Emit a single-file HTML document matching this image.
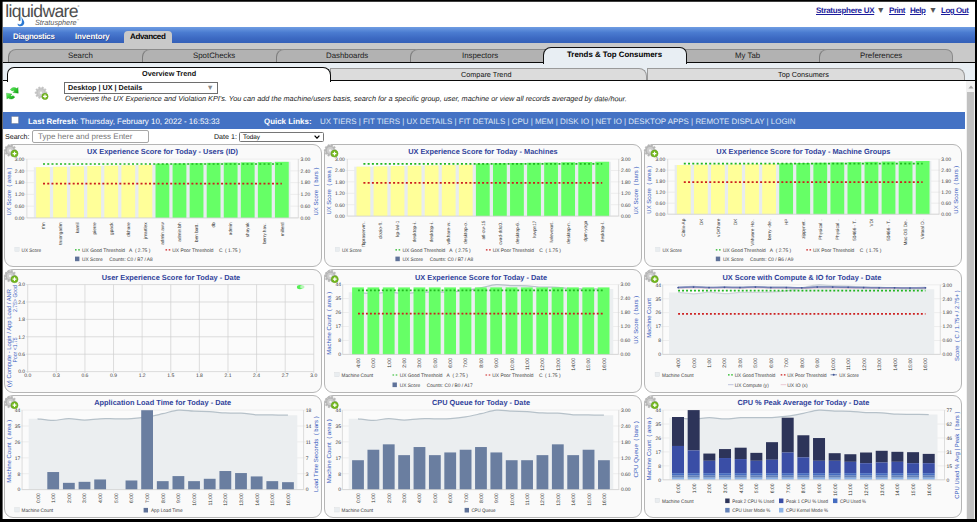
<!DOCTYPE html>
<html><head><meta charset="utf-8"><title>Stratusphere UX - Advanced - Trends &amp; Top Consumers</title>
<style>
html,body{margin:0;padding:0}
body{width:977px;height:522px;background:#fff;text-rendering:geometricPrecision;position:relative;overflow:hidden;font-family:'Liberation Sans',sans-serif;}
#pg{position:absolute;left:3px;top:2px;width:972px;height:517px;background:#fff;overflow:hidden}
.a{position:absolute;white-space:nowrap}
.u{display:inline-block;transform:rotate(0.03deg)}
.nav{left:0;top:25px;width:972px;height:16px;background:linear-gradient(#6f9de3 0%,#4a7bd0 35%,#3c69c2 70%,#3460b8 100%)}
.nav span{position:absolute;top:5px;font-weight:bold;font-size:8px;color:#fff;letter-spacing:-0.35px;text-shadow:0.5px 0.5px 0.5px #1b2f6b}
.adv{left:121px;top:29px;width:48px;height:13px;background:#c9c9c9;border-radius:4px 4px 0 0;font-weight:bold;font-size:8px;letter-spacing:-0.35px;color:#000;text-align:center;line-height:12px}
.t2{left:0;top:41px;width:972px;height:19px;background:#c9c9c9}
.tab{position:absolute;top:5.5px;height:14px;background:#b2b2b2;border:1px solid #8a8a8a;border-left:1.6px solid #7c7c7c;border-bottom:none;border-radius:8px 7px 0 0;box-sizing:border-box;font-size:8.0px;color:#1c1c1c;text-align:center;line-height:11px}
.tabt{position:absolute;top:6.6px;width:100px;text-align:center;font-size:7.85px;color:#1c1c1c;line-height:11px;z-index:2}
.tab.act{top:4px;height:17px;background:#e8eef3;border:1.2px solid #111;border-bottom:none;font-weight:bold;font-size:7.86px;color:#000;line-height:14px;z-index:3}
.bl{left:0;top:59.8px;width:972px;height:1.5px;background:#0a0a0a}
.t3{left:0;top:61px;width:972px;height:18px;background:#e8eef3}
.st{position:absolute;top:5px;height:13px;background:#dcdcdc;border:1px solid #9a9a9a;border-bottom:none;border-radius:0 8px 0 0;box-sizing:border-box;font-size:7.27px;color:#111;text-align:center;line-height:12px;padding-right:4px}
.st.act{padding-right:0;top:3.7px;height:15.2px;background:#fff;border:1.5px solid #0a0a0a;border-bottom:none;border-radius:7px 8px 0 0;font-weight:bold;line-height:12px;z-index:3}
.bl2{left:0;top:78px;width:972px;height:1.4px;background:#0a0a0a}
.hl{top:3.6px;font-weight:bold;font-size:8.0px;color:#1c1c9c;text-decoration:underline;letter-spacing:-0.45px}
.bar{left:0;top:110px;width:962px;height:16.5px;background:#4472c4;color:#fff;font-size:7.93px}
.panel{position:absolute;width:318.4px;height:122.6px;box-sizing:border-box;border:1px solid #b6b6b6;border-radius:9px;background:#fafafa}
svg text{font-family:'Liberation Sans',sans-serif}
</style></head><body>
<div id="pg">
<!-- logo -->
<svg class="a" style="left:0;top:0" width="90" height="26" viewBox="3 2 90 26">
<text x="5.3" y="16.7" font-size="17.6" fill="#4e4e4e" textLength="73.3" lengthAdjust="spacing">liquidware</text>
<text x="77.4" y="6.8" font-size="2.6" fill="#666">&#174;</text>
<text x="35" y="24.7" font-size="7.6" font-style="italic" fill="#5a5a5a" textLength="41.6" lengthAdjust="spacingAndGlyphs">Stratusphere</text>
<text x="76.8" y="21.2" font-size="2.4" fill="#777">&#8482;</text>
<path d="M21.3 16.4 C22.2 18.8 24.6 20.6 24.3 23.0 C24 25.3 21.6 26.7 19.5 26.2 C18 25.8 17.3 24.5 17.8 23.4 C18.6 24.5 20.2 24.8 21.2 23.7 C22.5 22.3 21.7 19.4 21.3 16.4Z" fill="#2b78d2"/>
</svg>
<!-- header links -->
<div class="a hl u" style="left:813.3px;letter-spacing:-0.3px">Stratusphere UX</div>
<div class="a" style="left:873.5px;top:3.2px;font-size:8.6px;color:#555">&#9660;</div>
<div class="a hl u" style="left:886px">Print</div>
<div class="a hl u" style="left:907.2px">Help</div>
<div class="a" style="left:925.7px;top:3.2px;font-size:8.6px;color:#555">&#9660;</div>
<div class="a hl u" style="left:938px">Log Out</div>
<!-- nav -->
<div class="a nav"><span class="u" style="left:10.3px">Diagnostics</span><span class="u" style="left:72.2px;letter-spacing:-0.15px">Inventory</span></div>
<div class="a adv"><span class="u">Advanced</span></div>
<div class="a t2"><div class="tab" style="left:5px;width:146px"></div><div class="tabt" style="left:27.299999999999997px"><span class="u">Search</span></div><div class="tab" style="left:139px;width:146px"></div><div class="tabt" style="left:160.7px"><span class="u">SpotChecks</span></div><div class="tab" style="left:273px;width:146px"></div><div class="tabt" style="left:294.1px"><span class="u">Dashboards</span></div><div class="tab" style="left:407px;width:145.5px"></div><div class="tabt" style="left:427.50000000000006px"><span class="u">Inspectors</span></div><div class="tab act" style="left:540px;width:143.5px"><span class="u">Trends &amp; Top Consumers</span></div><div class="tab" style="left:673px;width:156px"></div><div class="tabt" style="left:694.3px"><span class="u">My Tab</span></div><div class="tab" style="left:816px;width:134px"></div><div class="tabt" style="left:827.7px"><span class="u">Preferences</span></div></div>
<div class="a bl"></div>
<div class="a t3"><div class="st act" style="left:4.3px;width:323.6px"><span class="u">Overview Trend</span></div><div class="st" style="left:327px;width:317.4px"><span class="u">Compare Trend</span></div><div class="st" style="left:643.6px;width:318px"><span class="u">Top Consumers</span></div></div>
<div class="a bl2"></div>
<!-- toolbar -->
<svg class="a" style="left:2px;top:83px" width="15" height="16" viewBox="0 0 15 16">
<defs><linearGradient id="rg" x1="0" y1="0" x2="1" y2="1"><stop offset="0" stop-color="#7df07d"/><stop offset="0.45" stop-color="#35cf35"/><stop offset="1" stop-color="#159a15"/></linearGradient></defs>
<g fill="url(#rg)" stroke="#1aa01a" stroke-width="0.35" stroke-linejoin="round">
<path d="M5.3 4.6 C6.8 2.3 10.0 2.0 11.8 3.6 L13.0 2.4 L13.3 8.2 L7.9 7.5 L9.5 5.9 C8.6 5.3 7.7 5.4 7.1 6.0 Z"/>
<path d="M9.8 12.0 C8.2 14.4 5.0 14.6 3.2 12.9 L1.9 14.1 L1.5 8.2 L7.0 9.1 L5.4 10.7 C6.3 11.4 7.3 11.3 7.9 10.6 Z"/>
</g></svg>
<svg class="a" style="left:31px;top:83px" width="16" height="16" viewBox="0 0 16 16"><g transform="translate(1.0,1.7) scale(1.0)"><polygon points="11.86,5.29 11.86,6.71 10.41,6.89 10.09,7.87 11.15,8.87 10.32,10.01 9.04,9.32 8.21,9.92 8.48,11.35 7.14,11.79 6.51,10.47 5.49,10.47 4.86,11.79 3.52,11.35 3.79,9.92 2.96,9.32 1.68,10.01 0.85,8.87 1.91,7.87 1.59,6.89 0.14,6.71 0.14,5.29 1.59,5.11 1.91,4.13 0.85,3.13 1.68,1.99 2.96,2.68 3.79,2.08 3.52,0.65 4.86,0.21 5.49,1.53 6.51,1.53 7.14,0.21 8.48,0.65 8.21,2.08 9.04,2.68 10.32,1.99 11.15,3.13 10.09,4.13 10.41,5.11" fill="#c2c2c2" stroke="#c2c2c2" stroke-width="0.6" stroke-linejoin="round"/><circle cx="6" cy="6" r="3.3" fill="#cdcdcd"/><circle cx="6" cy="6" r="1.25" fill="#f3f3f3"/><circle cx="10.0" cy="9.7" r="3.1" fill="#74b81f" stroke="#5a9a14" stroke-width="0.5"/><path d="M8.1 9.7h3.8M10.0 7.799999999999999v3.8" stroke="#fff" stroke-width="1.2"/></g></svg>
<div class="a" style="left:61px;top:79.9px;width:153.5px;height:12.6px;border:1px solid #6e6e6e;box-sizing:border-box;background:#fff;font-weight:bold;font-size:7.22px;line-height:9.6px;padding-left:3.4px;color:#111"><span class="u">Desktop | UX | Details</span><span style="position:absolute;right:2.6px;top:0.2px;font-size:7.4px;color:#8a8a8a;font-weight:normal">&#9660;</span></div>
<div class="a" style="left:61.6px;top:91.9px;font-size:7.31px;font-style:italic;color:#222;line-height:9px"><span class="u">Overviews the UX Experience and Violation KPI's. You can add the machine/users basis, search for a specific group, user, machine or view all records averaged by date/hour.</span></div>
<!-- scrollbar -->
<div class="a" style="left:962.6px;top:79.4px;width:9px;height:440px;background:#f1f1f1"></div>
<div class="a" style="left:964.3px;top:90px;width:6.4px;height:430px;background:#c1c1c1"></div>
<svg class="a" style="left:964.6px;top:83px" width="6" height="4" viewBox="0 0 6 4"><path d="M0.4 3.6 L3 0.6 L5.6 3.6Z" fill="#a3a3a3"/></svg>
<!-- blue bar -->
<div class="a bar">
<div class="a" style="left:8.3px;top:4px;width:8px;height:8px;box-sizing:border-box;background:#fff;border:0.6px solid #8e9bb5;border-radius:1.5px"></div>
<div class="a" style="left:24.5px;top:4.8px;line-height:10px"><span class="u"><b>Last Refresh</b>: Thursday, February 10, 2022 - 16:53:33</span></div>
<div class="a" style="left:261.3px;top:4.8px;line-height:10px"><span class="u"><b>Quick Links:</b></span></div>
<div class="a" style="left:316.5px;top:4.8px;line-height:10px;font-size:7.94px;color:#dfe7f6"><span class="u">UX TIERS | FIT TIERS | UX DETAILS | FIT DETAILS | CPU | MEM | DISK IO | NET IO | DESKTOP APPS | REMOTE DISPLAY | LOGIN</span></div>
</div>
<!-- search row -->
<div class="a" style="left:2px;top:131.2px;font-size:7.1px;color:#111;line-height:9px"><span class="u">Search:</span></div>
<div class="a" style="left:29.2px;top:128.4px;width:116.6px;height:12.2px;border:1px solid #a6a6a6;border-radius:2px;box-sizing:border-box;font-size:8.03px;color:#757575;line-height:11.4px;padding-left:4.4px"><span class="u">Type here and press Enter</span></div>
<div class="a" style="left:211px;top:131.2px;font-size:7.1px;color:#111;line-height:9px"><span class="u">Date 1:</span></div>
<div class="a" style="left:236px;top:130px;width:85px;height:10.4px;border:1px solid #767676;border-radius:1.5px;box-sizing:border-box;font-size:6.4px;color:#000;line-height:9px;padding-left:3px;background:#fff"><span class="u">Today</span><svg style="position:absolute;right:2.6px;top:2.2px" width="6" height="4" viewBox="0 0 6 4"><path d="M0.6 0.6 L3 3.2 L5.4 0.6" fill="none" stroke="#000" stroke-width="1.2"/></svg></div>
<div class="panel" style="left:1px;top:142px;height:123px"></div><div class="panel" style="left:321px;top:142px;height:123px"></div><div class="panel" style="left:641px;top:142px;height:123px"></div><div class="panel" style="left:1px;top:267px;height:124px"></div><div class="panel" style="left:321px;top:267px;height:124px"></div><div class="panel" style="left:641px;top:267px;height:124px"></div><div class="panel" style="left:1px;top:393px;height:123px"></div><div class="panel" style="left:321px;top:393px;height:123px"></div><div class="panel" style="left:641px;top:393px;height:123px"></div>
<svg class="a" style="left:-3px;top:-2px" width="977" height="522" viewBox="0 0 977 522">
<text x="162.50" y="154.40" font-size="7.4" fill="#31439b" text-anchor="middle" textLength="151.00" lengthAdjust="spacingAndGlyphs" font-weight="bold" >UX Experience Score for Today - Users (ID)</text><rect x="26.9" y="159.1" width="271.40000000000003" height="58.80000000000001" fill="#fbfbfb" stroke="none"/><line x1="24.9" y1="159.10" x2="300.3" y2="159.10" stroke="#e4e4e4" stroke-width="0.6"/><line x1="24.9" y1="170.86" x2="300.3" y2="170.86" stroke="#e4e4e4" stroke-width="0.6"/><line x1="24.9" y1="182.62" x2="300.3" y2="182.62" stroke="#e4e4e4" stroke-width="0.6"/><line x1="24.9" y1="194.38" x2="300.3" y2="194.38" stroke="#e4e4e4" stroke-width="0.6"/><line x1="24.9" y1="206.14" x2="300.3" y2="206.14" stroke="#e4e4e4" stroke-width="0.6"/><line x1="24.9" y1="217.90" x2="300.3" y2="217.90" stroke="#e4e4e4" stroke-width="0.6"/><line x1="26.9" y1="159.1" x2="26.9" y2="217.9" stroke="#d0d0d0" stroke-width="0.7"/><line x1="298.3" y1="159.1" x2="298.3" y2="217.9" stroke="#d0d0d0" stroke-width="0.7"/><text x="24.40" y="160.90" font-size="5" fill="#333" text-anchor="end" >3.00</text><text x="24.40" y="172.66" font-size="5" fill="#333" text-anchor="end" >2.40</text><text x="24.40" y="184.42" font-size="5" fill="#333" text-anchor="end" >1.80</text><text x="24.40" y="196.18" font-size="5" fill="#333" text-anchor="end" >1.20</text><text x="24.40" y="207.94" font-size="5" fill="#333" text-anchor="end" >0.60</text><text x="24.40" y="219.70" font-size="5" fill="#333" text-anchor="end" >0.00</text><text x="300.50" y="160.90" font-size="5" fill="#333" >3.00</text><text x="300.50" y="172.66" font-size="5" fill="#333" >2.40</text><text x="300.50" y="184.42" font-size="5" fill="#333" >1.80</text><text x="300.50" y="196.18" font-size="5" fill="#333" >1.20</text><text x="300.50" y="207.94" font-size="5" fill="#333" >0.60</text><text x="300.50" y="219.70" font-size="5" fill="#333" >0.00</text><polygon points="33.80,217.90 33.80,167.14 43.00,167.14 60.06,166.78 77.12,166.42 94.18,166.06 111.24,165.70 128.30,165.34 145.36,164.98 162.42,163.61 179.48,163.36 196.54,163.10 213.60,162.85 230.66,162.60 247.72,162.35 264.78,162.10 281.84,161.84 290.50,161.84 290.50,217.90" fill="#e8ecef"/><rect x="36.10" y="167.14" width="13.8" height="50.76" fill="#ffff99"/><rect x="53.16" y="166.78" width="13.8" height="51.12" fill="#ffff99"/><rect x="70.22" y="166.42" width="13.8" height="51.48" fill="#ffff99"/><rect x="87.28" y="166.06" width="13.8" height="51.84" fill="#ffff99"/><rect x="104.34" y="165.70" width="13.8" height="52.20" fill="#ffff99"/><rect x="121.40" y="165.34" width="13.8" height="52.56" fill="#ffff99"/><rect x="138.46" y="164.98" width="13.8" height="52.92" fill="#ffff99"/><rect x="155.52" y="163.61" width="13.8" height="54.29" fill="#66ff66"/><rect x="172.58" y="163.36" width="13.8" height="54.54" fill="#66ff66"/><rect x="189.64" y="163.10" width="13.8" height="54.80" fill="#66ff66"/><rect x="206.70" y="162.85" width="13.8" height="55.05" fill="#66ff66"/><rect x="223.76" y="162.60" width="13.8" height="55.30" fill="#66ff66"/><rect x="240.82" y="162.35" width="13.8" height="55.55" fill="#66ff66"/><rect x="257.88" y="162.10" width="13.8" height="55.80" fill="#66ff66"/><rect x="274.94" y="161.84" width="13.8" height="56.06" fill="#66ff66"/><line x1="26.9" y1="217.9" x2="298.3" y2="217.9" stroke="#cfcfcf" stroke-width="0.7"/><line x1="43.00" y1="164.00" x2="281.84" y2="164.00" stroke="#1fb61f" stroke-width="1.7" stroke-dasharray="2 2.24"/><line x1="43.00" y1="183.60" x2="281.84" y2="183.60" stroke="#cc1f1f" stroke-width="1.7" stroke-dasharray="2 2.24"/><text x="44.70" y="222.40" font-size="4.7" fill="#333" text-anchor="end" transform="rotate(-90 44.70 222.40)" >tfm</text><text x="61.76" y="222.40" font-size="4.7" fill="#333" text-anchor="end" transform="rotate(-90 61.76 222.40)" >truongadm</text><text x="78.82" y="222.40" font-size="4.7" fill="#333" text-anchor="end" transform="rotate(-90 78.82 222.40)" >kamil</text><text x="95.88" y="222.40" font-size="4.7" fill="#333" text-anchor="end" transform="rotate(-90 95.88 222.40)" >pierre</text><text x="112.94" y="222.40" font-size="4.7" fill="#333" text-anchor="end" transform="rotate(-90 112.94 222.40)" >gpack</text><text x="130.00" y="222.40" font-size="4.7" fill="#333" text-anchor="end" transform="rotate(-90 130.00 222.40)" >dkhare</text><text x="147.06" y="222.40" font-size="4.7" fill="#333" text-anchor="end" transform="rotate(-90 147.06 222.40)" >jmartlex</text><text x="164.12" y="222.40" font-size="4.7" fill="#333" text-anchor="end" transform="rotate(-90 164.12 222.40)" >admin.avw</text><text x="181.18" y="222.40" font-size="4.7" fill="#333" text-anchor="end" transform="rotate(-90 181.18 222.40)" >admin.bh</text><text x="198.24" y="222.40" font-size="4.7" fill="#333" text-anchor="end" transform="rotate(-90 198.24 222.40)" >ben batt..</text><text x="215.30" y="222.40" font-size="4.7" fill="#333" text-anchor="end" transform="rotate(-90 215.30 222.40)" >db</text><text x="232.36" y="222.40" font-size="4.7" fill="#333" text-anchor="end" transform="rotate(-90 232.36 222.40)" >admin</text><text x="249.42" y="222.40" font-size="4.7" fill="#333" text-anchor="end" transform="rotate(-90 249.42 222.40)" >shayak</text><text x="266.48" y="222.40" font-size="4.7" fill="#333" text-anchor="end" transform="rotate(-90 266.48 222.40)" >berry.hav..</text><text x="283.54" y="222.40" font-size="4.7" fill="#333" text-anchor="end" transform="rotate(-90 283.54 222.40)" >millerd</text><text x="10.60" y="191.50" font-size="5.95" fill="#3a5cc0" text-anchor="middle" textLength="48.00" lengthAdjust="spacingAndGlyphs" transform="rotate(-90 10.60 191.50)" >UX Score&#160;&#160;( area )</text><text x="317.70" y="191.50" font-size="5.95" fill="#3a5cc0" text-anchor="middle" textLength="48.00" lengthAdjust="spacingAndGlyphs" transform="rotate(-90 317.70 191.50)" >UX Score&#160;&#160;( bars )</text><rect x="14.8" y="247.20000000000002" width="4.4" height="4.4" fill="#e9edf0" stroke="#dde1e4" stroke-width="0.4"/><text x="21.60" y="251.80" font-size="5" fill="#3a3a3a" textLength="19.50" lengthAdjust="spacingAndGlyphs" >UX Score</text><line x1="75.00" y1="249.80" x2="80.50" y2="249.80" stroke="#1fb61f" stroke-width="1.2" stroke-dasharray="1.6 1.6"/><text x="82.10" y="251.80" font-size="5" fill="#3a3a3a" textLength="68.20" lengthAdjust="spacingAndGlyphs" >UX Good Threshold&#160;&#160;&#160;A&#160;&#160;( 2.75 )</text><line x1="165.50" y1="249.80" x2="171.00" y2="249.80" stroke="#cc1f1f" stroke-width="1.2" stroke-dasharray="1.6 1.6"/><text x="172.30" y="251.80" font-size="5" fill="#3a3a3a" textLength="68.20" lengthAdjust="spacingAndGlyphs" >UX Poor Threshold&#160;&#160;&#160;&#160;C&#160;&#160;( 1.75 )</text><rect x="75" y="256.59999999999997" width="4.4" height="4.6" fill="#5f7299"/><text x="82.10" y="260.90" font-size="5" fill="#3a3a3a" textLength="70.60" lengthAdjust="spacingAndGlyphs" >UX Score&#160;&#160;&#160;&#160;&#160;Counts: C0 / B7 / A8</text><g transform="translate(4.2,144.4) scale(1.0)"><polygon points="11.86,5.29 11.86,6.71 10.41,6.89 10.09,7.87 11.15,8.87 10.32,10.01 9.04,9.32 8.21,9.92 8.48,11.35 7.14,11.79 6.51,10.47 5.49,10.47 4.86,11.79 3.52,11.35 3.79,9.92 2.96,9.32 1.68,10.01 0.85,8.87 1.91,7.87 1.59,6.89 0.14,6.71 0.14,5.29 1.59,5.11 1.91,4.13 0.85,3.13 1.68,1.99 2.96,2.68 3.79,2.08 3.52,0.65 4.86,0.21 5.49,1.53 6.51,1.53 7.14,0.21 8.48,0.65 8.21,2.08 9.04,2.68 10.32,1.99 11.15,3.13 10.09,4.13 10.41,5.11" fill="#b6b6b6" stroke="#b6b6b6" stroke-width="0.6" stroke-linejoin="round"/><circle cx="6" cy="6" r="3.3" fill="#cdcdcd"/><circle cx="6" cy="6" r="1.25" fill="#f3f3f3"/><circle cx="10.3" cy="9.2" r="3.5" fill="#74b81f" stroke="#5a9a14" stroke-width="0.5"/><path d="M8.4 9.2h3.8M10.3 7.299999999999999v3.8" stroke="#fff" stroke-width="1.2"/></g><text x="482.90" y="154.40" font-size="7.4" fill="#31439b" text-anchor="middle" textLength="149.50" lengthAdjust="spacingAndGlyphs" font-weight="bold" >UX Experience Score for Today - Machines</text><rect x="347.29999999999995" y="159.1" width="271.4000000000001" height="57.0" fill="#fbfbfb" stroke="none"/><line x1="345.29999999999995" y1="159.10" x2="620.7" y2="159.10" stroke="#e4e4e4" stroke-width="0.6"/><line x1="345.29999999999995" y1="170.50" x2="620.7" y2="170.50" stroke="#e4e4e4" stroke-width="0.6"/><line x1="345.29999999999995" y1="181.90" x2="620.7" y2="181.90" stroke="#e4e4e4" stroke-width="0.6"/><line x1="345.29999999999995" y1="193.30" x2="620.7" y2="193.30" stroke="#e4e4e4" stroke-width="0.6"/><line x1="345.29999999999995" y1="204.70" x2="620.7" y2="204.70" stroke="#e4e4e4" stroke-width="0.6"/><line x1="345.29999999999995" y1="216.10" x2="620.7" y2="216.10" stroke="#e4e4e4" stroke-width="0.6"/><line x1="347.29999999999995" y1="159.1" x2="347.29999999999995" y2="216.1" stroke="#d0d0d0" stroke-width="0.7"/><line x1="618.7" y1="159.1" x2="618.7" y2="216.1" stroke="#d0d0d0" stroke-width="0.7"/><text x="344.80" y="160.90" font-size="5" fill="#333" text-anchor="end" >3.00</text><text x="344.80" y="172.30" font-size="5" fill="#333" text-anchor="end" >2.40</text><text x="344.80" y="183.70" font-size="5" fill="#333" text-anchor="end" >1.80</text><text x="344.80" y="195.10" font-size="5" fill="#333" text-anchor="end" >1.20</text><text x="344.80" y="206.50" font-size="5" fill="#333" text-anchor="end" >0.60</text><text x="344.80" y="217.90" font-size="5" fill="#333" text-anchor="end" >0.00</text><text x="620.90" y="160.90" font-size="5" fill="#333" >3.00</text><text x="620.90" y="172.30" font-size="5" fill="#333" >2.40</text><text x="620.90" y="183.70" font-size="5" fill="#333" >1.80</text><text x="620.90" y="195.10" font-size="5" fill="#333" >1.20</text><text x="620.90" y="206.50" font-size="5" fill="#333" >0.60</text><text x="620.90" y="217.90" font-size="5" fill="#333" >0.00</text><polygon points="354.20,216.10 354.20,166.70 363.40,166.70 380.46,166.38 397.52,166.07 414.58,165.75 431.64,165.43 448.70,165.12 465.76,164.80 482.82,163.47 499.88,163.23 516.94,162.98 534.00,162.74 551.06,162.49 568.12,162.25 585.18,162.00 602.24,161.76 610.90,161.76 610.90,216.10" fill="#e8ecef"/><rect x="356.50" y="166.70" width="13.8" height="49.40" fill="#ffff99"/><rect x="373.56" y="166.38" width="13.8" height="49.72" fill="#ffff99"/><rect x="390.62" y="166.07" width="13.8" height="50.03" fill="#ffff99"/><rect x="407.68" y="165.75" width="13.8" height="50.35" fill="#ffff99"/><rect x="424.74" y="165.43" width="13.8" height="50.67" fill="#ffff99"/><rect x="441.80" y="165.12" width="13.8" height="50.98" fill="#ffff99"/><rect x="458.86" y="164.80" width="13.8" height="51.30" fill="#ffff99"/><rect x="475.92" y="163.47" width="13.8" height="52.63" fill="#66ff66"/><rect x="492.98" y="163.23" width="13.8" height="52.87" fill="#66ff66"/><rect x="510.04" y="162.98" width="13.8" height="53.12" fill="#66ff66"/><rect x="527.10" y="162.74" width="13.8" height="53.36" fill="#66ff66"/><rect x="544.16" y="162.49" width="13.8" height="53.61" fill="#66ff66"/><rect x="561.22" y="162.25" width="13.8" height="53.85" fill="#66ff66"/><rect x="578.28" y="162.00" width="13.8" height="54.10" fill="#66ff66"/><rect x="595.34" y="161.76" width="13.8" height="54.34" fill="#66ff66"/><line x1="347.29999999999995" y1="216.1" x2="618.7" y2="216.1" stroke="#cfcfcf" stroke-width="0.7"/><line x1="363.40" y1="163.85" x2="602.24" y2="163.85" stroke="#1fb61f" stroke-width="1.7" stroke-dasharray="2 2.24"/><line x1="363.40" y1="182.85" x2="602.24" y2="182.85" stroke="#cc1f1f" stroke-width="1.7" stroke-dasharray="2 2.24"/><text x="365.10" y="220.60" font-size="4.7" fill="#333" text-anchor="end" transform="rotate(-90 365.10 220.60)" >fbpraservm..</text><text x="382.16" y="220.60" font-size="4.7" fill="#333" text-anchor="end" transform="rotate(-90 382.16 220.60)" >clozio-fl..</text><text x="399.22" y="220.60" font-size="4.7" fill="#333" text-anchor="end" transform="rotate(-90 399.22 220.60)" >kp-lwl-1</text><text x="416.28" y="220.60" font-size="4.7" fill="#333" text-anchor="end" transform="rotate(-90 416.28 220.60)" >desktop-i..</text><text x="433.34" y="220.60" font-size="4.7" fill="#333" text-anchor="end" transform="rotate(-90 433.34 220.60)" >desktop-i..</text><text x="450.40" y="220.60" font-size="4.7" fill="#333" text-anchor="end" transform="rotate(-90 450.40 220.60)" >vdkhare-w..</text><text x="467.46" y="220.60" font-size="4.7" fill="#333" text-anchor="end" transform="rotate(-90 467.46 220.60)" >desktop-o..</text><text x="484.52" y="220.60" font-size="4.7" fill="#333" text-anchor="end" transform="rotate(-90 484.52 220.60)" >atl-cw-15</text><text x="501.58" y="220.60" font-size="4.7" fill="#333" text-anchor="end" transform="rotate(-90 501.58 220.60)" >cvad-ddc0..</text><text x="518.64" y="220.60" font-size="4.7" fill="#333" text-anchor="end" transform="rotate(-90 518.64 220.60)" >desktop-6..</text><text x="535.70" y="220.60" font-size="4.7" fill="#333" text-anchor="end" transform="rotate(-90 535.70 220.60)" >lwvpn17</text><text x="552.76" y="220.60" font-size="4.7" fill="#333" text-anchor="end" transform="rotate(-90 552.76 220.60)" >lwlevexut..</text><text x="569.82" y="220.60" font-size="4.7" fill="#333" text-anchor="end" transform="rotate(-90 569.82 220.60)" >desktop-n..</text><text x="586.88" y="220.60" font-size="4.7" fill="#333" text-anchor="end" transform="rotate(-90 586.88 220.60)" >dpm-yoga</text><text x="603.94" y="220.60" font-size="4.7" fill="#333" text-anchor="end" transform="rotate(-90 603.94 220.60)" >desktop-l..</text><text x="331.00" y="190.60" font-size="5.95" fill="#3a5cc0" text-anchor="middle" textLength="48.00" lengthAdjust="spacingAndGlyphs" transform="rotate(-90 331.00 190.60)" >UX Score&#160;&#160;( area )</text><text x="638.10" y="190.60" font-size="5.95" fill="#3a5cc0" text-anchor="middle" textLength="48.00" lengthAdjust="spacingAndGlyphs" transform="rotate(-90 638.10 190.60)" >UX Score&#160;&#160;( bars )</text><rect x="335.2" y="247.20000000000002" width="4.4" height="4.4" fill="#e9edf0" stroke="#dde1e4" stroke-width="0.4"/><text x="342.00" y="251.80" font-size="5" fill="#3a3a3a" textLength="19.50" lengthAdjust="spacingAndGlyphs" >UX Score</text><line x1="395.40" y1="249.80" x2="400.90" y2="249.80" stroke="#1fb61f" stroke-width="1.2" stroke-dasharray="1.6 1.6"/><text x="402.50" y="251.80" font-size="5" fill="#3a3a3a" textLength="68.20" lengthAdjust="spacingAndGlyphs" >UX Good Threshold&#160;&#160;&#160;A&#160;&#160;( 2.75 )</text><line x1="485.90" y1="249.80" x2="491.40" y2="249.80" stroke="#cc1f1f" stroke-width="1.2" stroke-dasharray="1.6 1.6"/><text x="492.70" y="251.80" font-size="5" fill="#3a3a3a" textLength="68.20" lengthAdjust="spacingAndGlyphs" >UX Poor Threshold&#160;&#160;&#160;&#160;C&#160;&#160;( 1.75 )</text><rect x="395.4" y="256.59999999999997" width="4.4" height="4.6" fill="#5f7299"/><text x="402.50" y="260.90" font-size="5" fill="#3a3a3a" textLength="70.60" lengthAdjust="spacingAndGlyphs" >UX Score&#160;&#160;&#160;&#160;&#160;Counts: C0 / B7 / A8</text><g transform="translate(324.2,144.4) scale(1.0)"><polygon points="11.86,5.29 11.86,6.71 10.41,6.89 10.09,7.87 11.15,8.87 10.32,10.01 9.04,9.32 8.21,9.92 8.48,11.35 7.14,11.79 6.51,10.47 5.49,10.47 4.86,11.79 3.52,11.35 3.79,9.92 2.96,9.32 1.68,10.01 0.85,8.87 1.91,7.87 1.59,6.89 0.14,6.71 0.14,5.29 1.59,5.11 1.91,4.13 0.85,3.13 1.68,1.99 2.96,2.68 3.79,2.08 3.52,0.65 4.86,0.21 5.49,1.53 6.51,1.53 7.14,0.21 8.48,0.65 8.21,2.08 9.04,2.68 10.32,1.99 11.15,3.13 10.09,4.13 10.41,5.11" fill="#b6b6b6" stroke="#b6b6b6" stroke-width="0.6" stroke-linejoin="round"/><circle cx="6" cy="6" r="3.3" fill="#cdcdcd"/><circle cx="6" cy="6" r="1.25" fill="#f3f3f3"/><circle cx="10.3" cy="9.2" r="3.5" fill="#74b81f" stroke="#5a9a14" stroke-width="0.5"/><path d="M8.4 9.2h3.8M10.3 7.299999999999999v3.8" stroke="#fff" stroke-width="1.2"/></g><text x="803.30" y="154.40" font-size="7.4" fill="#31439b" text-anchor="middle" textLength="174.00" lengthAdjust="spacingAndGlyphs" font-weight="bold" >UX Experience Score for Today - Machine Groups</text><rect x="667.6999999999999" y="159.1" width="271.4" height="55.099999999999994" fill="#fbfbfb" stroke="none"/><line x1="665.6999999999999" y1="159.10" x2="941.0999999999999" y2="159.10" stroke="#e4e4e4" stroke-width="0.6"/><line x1="665.6999999999999" y1="170.12" x2="941.0999999999999" y2="170.12" stroke="#e4e4e4" stroke-width="0.6"/><line x1="665.6999999999999" y1="181.14" x2="941.0999999999999" y2="181.14" stroke="#e4e4e4" stroke-width="0.6"/><line x1="665.6999999999999" y1="192.16" x2="941.0999999999999" y2="192.16" stroke="#e4e4e4" stroke-width="0.6"/><line x1="665.6999999999999" y1="203.18" x2="941.0999999999999" y2="203.18" stroke="#e4e4e4" stroke-width="0.6"/><line x1="665.6999999999999" y1="214.20" x2="941.0999999999999" y2="214.20" stroke="#e4e4e4" stroke-width="0.6"/><line x1="667.6999999999999" y1="159.1" x2="667.6999999999999" y2="214.2" stroke="#d0d0d0" stroke-width="0.7"/><line x1="939.0999999999999" y1="159.1" x2="939.0999999999999" y2="214.2" stroke="#d0d0d0" stroke-width="0.7"/><text x="665.20" y="160.90" font-size="5" fill="#333" text-anchor="end" >3.00</text><text x="665.20" y="171.92" font-size="5" fill="#333" text-anchor="end" >2.40</text><text x="665.20" y="182.94" font-size="5" fill="#333" text-anchor="end" >1.80</text><text x="665.20" y="193.96" font-size="5" fill="#333" text-anchor="end" >1.20</text><text x="665.20" y="204.98" font-size="5" fill="#333" text-anchor="end" >0.60</text><text x="665.20" y="216.00" font-size="5" fill="#333" text-anchor="end" >0.00</text><text x="941.30" y="160.90" font-size="5" fill="#333" >3.00</text><text x="941.30" y="171.92" font-size="5" fill="#333" >2.40</text><text x="941.30" y="182.94" font-size="5" fill="#333" >1.80</text><text x="941.30" y="193.96" font-size="5" fill="#333" >1.20</text><text x="941.30" y="204.98" font-size="5" fill="#333" >0.60</text><text x="941.30" y="216.00" font-size="5" fill="#333" >0.00</text><polygon points="674.60,214.20 674.60,164.98 683.80,164.98 700.86,164.79 717.92,164.61 734.98,164.43 752.04,164.24 769.10,164.06 786.16,163.32 803.22,163.03 820.28,162.73 837.34,162.43 854.40,162.13 871.46,161.83 888.52,161.53 905.58,161.24 922.64,160.94 931.30,160.94 931.30,214.20" fill="#e8ecef"/><rect x="676.90" y="164.98" width="13.8" height="49.22" fill="#ffff99"/><rect x="693.96" y="164.79" width="13.8" height="49.41" fill="#ffff99"/><rect x="711.02" y="164.61" width="13.8" height="49.59" fill="#ffff99"/><rect x="728.08" y="164.43" width="13.8" height="49.77" fill="#ffff99"/><rect x="745.14" y="164.24" width="13.8" height="49.96" fill="#ffff99"/><rect x="762.20" y="164.06" width="13.8" height="50.14" fill="#ffff99"/><rect x="779.26" y="163.32" width="13.8" height="50.88" fill="#66ff66"/><rect x="796.32" y="163.03" width="13.8" height="51.17" fill="#66ff66"/><rect x="813.38" y="162.73" width="13.8" height="51.47" fill="#66ff66"/><rect x="830.44" y="162.43" width="13.8" height="51.77" fill="#66ff66"/><rect x="847.50" y="162.13" width="13.8" height="52.07" fill="#66ff66"/><rect x="864.56" y="161.83" width="13.8" height="52.37" fill="#66ff66"/><rect x="881.62" y="161.53" width="13.8" height="52.67" fill="#66ff66"/><rect x="898.68" y="161.24" width="13.8" height="52.96" fill="#66ff66"/><rect x="915.74" y="160.94" width="13.8" height="53.26" fill="#66ff66"/><line x1="667.6999999999999" y1="214.2" x2="939.0999999999999" y2="214.2" stroke="#cfcfcf" stroke-width="0.7"/><line x1="683.80" y1="163.69" x2="922.64" y2="163.69" stroke="#1fb61f" stroke-width="1.7" stroke-dasharray="2 2.24"/><line x1="683.80" y1="182.06" x2="922.64" y2="182.06" stroke="#cc1f1f" stroke-width="1.7" stroke-dasharray="2 2.24"/><text x="685.50" y="218.70" font-size="4.7" fill="#333" text-anchor="end" transform="rotate(-90 685.50 218.70)" >Citrix-Ap</text><text x="702.56" y="218.70" font-size="4.7" fill="#333" text-anchor="end" transform="rotate(-90 702.56 218.70)" >DK</text><text x="719.62" y="218.70" font-size="4.7" fill="#333" text-anchor="end" transform="rotate(-90 719.62 218.70)" >vDKhare</text><text x="736.68" y="218.70" font-size="4.7" fill="#333" text-anchor="end" transform="rotate(-90 736.68 218.70)" >DK</text><text x="753.74" y="218.70" font-size="4.7" fill="#333" text-anchor="end" transform="rotate(-90 753.74 218.70)" >VMware Ho..</text><text x="770.80" y="218.70" font-size="4.7" fill="#333" text-anchor="end" transform="rotate(-90 770.80 218.70)" >berry -de..</text><text x="787.86" y="218.70" font-size="4.7" fill="#333" text-anchor="end" transform="rotate(-90 787.86 218.70)" >HP</text><text x="804.92" y="218.70" font-size="4.7" fill="#333" text-anchor="end" transform="rotate(-90 804.92 218.70)" >zippynet..</text><text x="821.98" y="218.70" font-size="4.7" fill="#333" text-anchor="end" transform="rotate(-90 821.98 218.70)" >Physical ..</text><text x="839.04" y="218.70" font-size="4.7" fill="#333" text-anchor="end" transform="rotate(-90 839.04 218.70)" >Physical ..</text><text x="856.10" y="218.70" font-size="4.7" fill="#333" text-anchor="end" transform="rotate(-90 856.10 218.70)" >50466 - T..</text><text x="873.16" y="218.70" font-size="4.7" fill="#333" text-anchor="end" transform="rotate(-90 873.16 218.70)" >VDI</text><text x="890.22" y="218.70" font-size="4.7" fill="#333" text-anchor="end" transform="rotate(-90 890.22 218.70)" >50466 - T..</text><text x="907.28" y="218.70" font-size="4.7" fill="#333" text-anchor="end" transform="rotate(-90 907.28 218.70)" >Mac OS De..</text><text x="924.34" y="218.70" font-size="4.7" fill="#333" text-anchor="end" transform="rotate(-90 924.34 218.70)" >Virtual D..</text><text x="651.40" y="189.65" font-size="5.95" fill="#3a5cc0" text-anchor="middle" textLength="48.00" lengthAdjust="spacingAndGlyphs" transform="rotate(-90 651.40 189.65)" >UX Score&#160;&#160;( area )</text><text x="958.50" y="189.65" font-size="5.95" fill="#3a5cc0" text-anchor="middle" textLength="48.00" lengthAdjust="spacingAndGlyphs" transform="rotate(-90 958.50 189.65)" >UX Score&#160;&#160;( bars )</text><rect x="655.5999999999999" y="247.20000000000002" width="4.4" height="4.4" fill="#e9edf0" stroke="#dde1e4" stroke-width="0.4"/><text x="662.40" y="251.80" font-size="5" fill="#3a3a3a" textLength="19.50" lengthAdjust="spacingAndGlyphs" >UX Score</text><line x1="715.80" y1="249.80" x2="721.30" y2="249.80" stroke="#1fb61f" stroke-width="1.2" stroke-dasharray="1.6 1.6"/><text x="722.90" y="251.80" font-size="5" fill="#3a3a3a" textLength="68.20" lengthAdjust="spacingAndGlyphs" >UX Good Threshold&#160;&#160;&#160;A&#160;&#160;( 2.75 )</text><line x1="806.30" y1="249.80" x2="811.80" y2="249.80" stroke="#cc1f1f" stroke-width="1.2" stroke-dasharray="1.6 1.6"/><text x="813.10" y="251.80" font-size="5" fill="#3a3a3a" textLength="68.20" lengthAdjust="spacingAndGlyphs" >UX Poor Threshold&#160;&#160;&#160;&#160;C&#160;&#160;( 1.75 )</text><rect x="715.8" y="256.59999999999997" width="4.4" height="4.6" fill="#5f7299"/><text x="722.90" y="260.90" font-size="5" fill="#3a3a3a" textLength="70.60" lengthAdjust="spacingAndGlyphs" >UX Score&#160;&#160;&#160;&#160;&#160;Counts: C0 / B6 / A9</text><g transform="translate(644.2,144.4) scale(1.0)"><polygon points="11.86,5.29 11.86,6.71 10.41,6.89 10.09,7.87 11.15,8.87 10.32,10.01 9.04,9.32 8.21,9.92 8.48,11.35 7.14,11.79 6.51,10.47 5.49,10.47 4.86,11.79 3.52,11.35 3.79,9.92 2.96,9.32 1.68,10.01 0.85,8.87 1.91,7.87 1.59,6.89 0.14,6.71 0.14,5.29 1.59,5.11 1.91,4.13 0.85,3.13 1.68,1.99 2.96,2.68 3.79,2.08 3.52,0.65 4.86,0.21 5.49,1.53 6.51,1.53 7.14,0.21 8.48,0.65 8.21,2.08 9.04,2.68 10.32,1.99 11.15,3.13 10.09,4.13 10.41,5.11" fill="#b6b6b6" stroke="#b6b6b6" stroke-width="0.6" stroke-linejoin="round"/><circle cx="6" cy="6" r="3.3" fill="#cdcdcd"/><circle cx="6" cy="6" r="1.25" fill="#f3f3f3"/><circle cx="10.3" cy="9.2" r="3.5" fill="#74b81f" stroke="#5a9a14" stroke-width="0.5"/><path d="M8.4 9.2h3.8M10.3 7.299999999999999v3.8" stroke="#fff" stroke-width="1.2"/></g><text x="171.00" y="280.00" font-size="7.4" fill="#31439b" text-anchor="middle" textLength="138.50" lengthAdjust="spacingAndGlyphs" font-weight="bold" >User Experience Score for Today - Date</text><rect x="27.7" y="284.6" width="286.1" height="87.0" fill="#fbfbfb"/><line x1="27.70" y1="284.6" x2="27.70" y2="373.1" stroke="#d0d0d0" stroke-width="0.7"/><text x="27.70" y="377.20" font-size="5" fill="#333" text-anchor="middle" >0.0</text><line x1="56.31" y1="284.6" x2="56.31" y2="373.1" stroke="#d0d0d0" stroke-width="0.7"/><text x="56.31" y="377.20" font-size="5" fill="#333" text-anchor="middle" >0.3</text><line x1="84.92" y1="284.6" x2="84.92" y2="373.1" stroke="#d0d0d0" stroke-width="0.7"/><text x="84.92" y="377.20" font-size="5" fill="#333" text-anchor="middle" >0.6</text><line x1="113.53" y1="284.6" x2="113.53" y2="373.1" stroke="#d0d0d0" stroke-width="0.7"/><text x="113.53" y="377.20" font-size="5" fill="#333" text-anchor="middle" >0.9</text><line x1="142.14" y1="284.6" x2="142.14" y2="373.1" stroke="#d0d0d0" stroke-width="0.7"/><text x="142.14" y="377.20" font-size="5" fill="#333" text-anchor="middle" >1.2</text><line x1="170.75" y1="284.6" x2="170.75" y2="373.1" stroke="#d0d0d0" stroke-width="0.7"/><text x="170.75" y="377.20" font-size="5" fill="#333" text-anchor="middle" >1.5</text><line x1="199.36" y1="284.6" x2="199.36" y2="373.1" stroke="#d0d0d0" stroke-width="0.7"/><text x="199.36" y="377.20" font-size="5" fill="#333" text-anchor="middle" >1.8</text><line x1="227.97" y1="284.6" x2="227.97" y2="373.1" stroke="#d0d0d0" stroke-width="0.7"/><text x="227.97" y="377.20" font-size="5" fill="#333" text-anchor="middle" >2.1</text><line x1="256.58" y1="284.6" x2="256.58" y2="373.1" stroke="#d0d0d0" stroke-width="0.7"/><text x="256.58" y="377.20" font-size="5" fill="#333" text-anchor="middle" >2.4</text><line x1="285.19" y1="284.6" x2="285.19" y2="373.1" stroke="#d0d0d0" stroke-width="0.7"/><text x="285.19" y="377.20" font-size="5" fill="#333" text-anchor="middle" >2.7</text><line x1="313.80" y1="284.6" x2="313.80" y2="373.1" stroke="#d0d0d0" stroke-width="0.7"/><text x="313.80" y="377.20" font-size="5" fill="#333" text-anchor="middle" >3.0</text><line x1="26.2" y1="284.60" x2="313.8" y2="284.60" stroke="#d0d0d0" stroke-width="0.7"/><text x="25.10" y="286.40" font-size="5" fill="#333" text-anchor="end" >3.0</text><line x1="26.2" y1="302.00" x2="313.8" y2="302.00" stroke="#d0d0d0" stroke-width="0.7"/><text x="25.10" y="303.80" font-size="5" fill="#333" text-anchor="end" >2.4</text><line x1="26.2" y1="319.40" x2="313.8" y2="319.40" stroke="#d0d0d0" stroke-width="0.7"/><text x="25.10" y="321.20" font-size="5" fill="#333" text-anchor="end" >1.8</text><line x1="26.2" y1="336.80" x2="313.8" y2="336.80" stroke="#d0d0d0" stroke-width="0.7"/><text x="25.10" y="338.60" font-size="5" fill="#333" text-anchor="end" >1.2</text><line x1="26.2" y1="354.20" x2="313.8" y2="354.20" stroke="#d0d0d0" stroke-width="0.7"/><text x="25.10" y="356.00" font-size="5" fill="#333" text-anchor="end" >0.6</text><line x1="26.2" y1="371.60" x2="313.8" y2="371.60" stroke="#d0d0d0" stroke-width="0.7"/><text x="25.10" y="373.40" font-size="5" fill="#333" text-anchor="end" >0.0</text><ellipse cx="299.9" cy="287.1" rx="3.0" ry="2.2" fill="#55ee55"/><ellipse cx="302.3" cy="286.9" rx="2.2" ry="1.7" fill="#b8f7b8"/><text x="10.70" y="338.00" font-size="5.95" fill="#3a5cc0" text-anchor="middle" textLength="98.00" lengthAdjust="spacingAndGlyphs" transform="rotate(-90 10.70 338.00)" >(y) Compute - Login / App Load / ANR</text><text x="16.80" y="323.80" font-size="5.95" fill="#3a5cc0" text-anchor="middle" textLength="77.30" lengthAdjust="spacingAndGlyphs" transform="rotate(-90 16.80 323.80)" >Poor &lt;1.75&#160;&#160;&#160;&#160;&#160;&#160;&#160;&#160;&#160;&#160;&#160;&#160;&#160;&#160;&#160;&#160;&#160;&#160;2.75&gt; Good</text><g transform="translate(4.2,270.0) scale(1.0)"><polygon points="11.86,5.29 11.86,6.71 10.41,6.89 10.09,7.87 11.15,8.87 10.32,10.01 9.04,9.32 8.21,9.92 8.48,11.35 7.14,11.79 6.51,10.47 5.49,10.47 4.86,11.79 3.52,11.35 3.79,9.92 2.96,9.32 1.68,10.01 0.85,8.87 1.91,7.87 1.59,6.89 0.14,6.71 0.14,5.29 1.59,5.11 1.91,4.13 0.85,3.13 1.68,1.99 2.96,2.68 3.79,2.08 3.52,0.65 4.86,0.21 5.49,1.53 6.51,1.53 7.14,0.21 8.48,0.65 8.21,2.08 9.04,2.68 10.32,1.99 11.15,3.13 10.09,4.13 10.41,5.11" fill="#b6b6b6" stroke="#b6b6b6" stroke-width="0.6" stroke-linejoin="round"/><circle cx="6" cy="6" r="3.3" fill="#cdcdcd"/><circle cx="6" cy="6" r="1.25" fill="#f3f3f3"/><circle cx="10.3" cy="9.2" r="3.5" fill="#74b81f" stroke="#5a9a14" stroke-width="0.5"/><path d="M8.4 9.2h3.8M10.3 7.299999999999999v3.8" stroke="#fff" stroke-width="1.2"/></g><text x="481.00" y="279.60" font-size="7.4" fill="#31439b" text-anchor="middle" textLength="132.00" lengthAdjust="spacingAndGlyphs" font-weight="bold" >UX Experience Score for Today - Date</text><rect x="342.7" y="284.6" width="275.7" height="69.79999999999995" fill="#fbfbfb"/><line x1="340.7" y1="284.60" x2="620.4" y2="284.60" stroke="#e4e4e4" stroke-width="0.6"/><line x1="340.7" y1="298.56" x2="620.4" y2="298.56" stroke="#e4e4e4" stroke-width="0.6"/><line x1="340.7" y1="312.52" x2="620.4" y2="312.52" stroke="#e4e4e4" stroke-width="0.6"/><line x1="340.7" y1="326.48" x2="620.4" y2="326.48" stroke="#e4e4e4" stroke-width="0.6"/><line x1="340.7" y1="340.44" x2="620.4" y2="340.44" stroke="#e4e4e4" stroke-width="0.6"/><line x1="340.7" y1="354.40" x2="620.4" y2="354.40" stroke="#e4e4e4" stroke-width="0.6"/><line x1="342.7" y1="284.6" x2="342.7" y2="354.4" stroke="#d0d0d0" stroke-width="0.7"/><line x1="618.4" y1="284.6" x2="618.4" y2="354.4" stroke="#d0d0d0" stroke-width="0.7"/><text x="341.10" y="286.40" font-size="5" fill="#333" text-anchor="end" >44</text><text x="341.10" y="300.36" font-size="5" fill="#333" text-anchor="end" >35</text><text x="341.10" y="314.32" font-size="5" fill="#333" text-anchor="end" >26</text><text x="341.10" y="328.28" font-size="5" fill="#333" text-anchor="end" >17</text><text x="341.10" y="342.24" font-size="5" fill="#333" text-anchor="end" >8</text><text x="341.10" y="356.20" font-size="5" fill="#333" text-anchor="end" >0</text><text x="620.50" y="286.40" font-size="5" fill="#333" >3.00</text><text x="620.50" y="300.36" font-size="5" fill="#333" >2.40</text><text x="620.50" y="314.32" font-size="5" fill="#333" >1.80</text><text x="620.50" y="328.28" font-size="5" fill="#333" >1.20</text><text x="620.50" y="342.24" font-size="5" fill="#333" >0.60</text><text x="620.50" y="356.20" font-size="5" fill="#333" >0.00</text><polygon points="348.70,354.40 348.70,292.21 358.00,292.21 373.35,293.64 388.70,292.06 404.05,293.48 419.40,292.21 434.75,292.21 450.10,292.06 465.45,290.63 480.80,287.77 496.15,284.60 511.50,285.55 526.85,285.87 542.20,287.14 557.55,287.30 572.90,288.72 588.25,288.88 603.60,289.04 613.20,289.04 613.20,354.40" fill="#ebeef0"/><text x="330.70" y="323.30" font-size="5.95" fill="#3a5cc0" text-anchor="middle" textLength="63.00" lengthAdjust="spacingAndGlyphs" transform="rotate(-90 330.70 323.30)" >Machine Count&#160;&#160;( area )</text><text x="638.20" y="319.80" font-size="5.95" fill="#3a5cc0" text-anchor="middle" textLength="48.00" lengthAdjust="spacingAndGlyphs" transform="rotate(-90 638.20 319.80)" >UX Score&#160;&#160;( bars )</text><text x="360.00" y="358.00" font-size="5.05" fill="#333" text-anchor="end" transform="rotate(-90 360.00 358.00)" >4:00</text><text x="375.35" y="358.00" font-size="5.05" fill="#333" text-anchor="end" transform="rotate(-90 375.35 358.00)" >0:00</text><text x="390.70" y="358.00" font-size="5.05" fill="#333" text-anchor="end" transform="rotate(-90 390.70 358.00)" >1:00</text><text x="406.05" y="358.00" font-size="5.05" fill="#333" text-anchor="end" transform="rotate(-90 406.05 358.00)" >2:00</text><text x="421.40" y="358.00" font-size="5.05" fill="#333" text-anchor="end" transform="rotate(-90 421.40 358.00)" >3:00</text><text x="436.75" y="358.00" font-size="5.05" fill="#333" text-anchor="end" transform="rotate(-90 436.75 358.00)" >5:00</text><text x="452.10" y="358.00" font-size="5.05" fill="#333" text-anchor="end" transform="rotate(-90 452.10 358.00)" >6:00</text><text x="467.45" y="358.00" font-size="5.05" fill="#333" text-anchor="end" transform="rotate(-90 467.45 358.00)" >7:00</text><text x="482.80" y="358.00" font-size="5.05" fill="#333" text-anchor="end" transform="rotate(-90 482.80 358.00)" >8:00</text><text x="498.15" y="358.00" font-size="5.05" fill="#333" text-anchor="end" transform="rotate(-90 498.15 358.00)" >9:00</text><text x="513.50" y="358.00" font-size="5.05" fill="#333" text-anchor="end" transform="rotate(-90 513.50 358.00)" >10:00</text><text x="528.85" y="358.00" font-size="5.05" fill="#333" text-anchor="end" transform="rotate(-90 528.85 358.00)" >11:00</text><text x="544.20" y="358.00" font-size="5.05" fill="#333" text-anchor="end" transform="rotate(-90 544.20 358.00)" >12:00</text><text x="559.55" y="358.00" font-size="5.05" fill="#333" text-anchor="end" transform="rotate(-90 559.55 358.00)" >13:00</text><text x="574.90" y="358.00" font-size="5.05" fill="#333" text-anchor="end" transform="rotate(-90 574.90 358.00)" >14:00</text><text x="590.25" y="358.00" font-size="5.05" fill="#333" text-anchor="end" transform="rotate(-90 590.25 358.00)" >15:00</text><text x="605.60" y="358.00" font-size="5.05" fill="#333" text-anchor="end" transform="rotate(-90 605.60 358.00)" >16:00</text><path d="M358.00 292.21 C360.56 292.45 368.23 293.67 373.35 293.64 C378.47 293.62 383.58 292.08 388.70 292.06 C393.82 292.03 398.93 293.46 404.05 293.48 C409.17 293.51 414.28 292.43 419.40 292.21 C424.52 292.00 429.63 292.24 434.75 292.21 C439.87 292.19 444.98 292.32 450.10 292.06 C455.22 291.79 460.33 291.34 465.45 290.63 C470.57 289.91 475.68 288.78 480.80 287.77 C485.92 286.77 491.03 284.97 496.15 284.60 C501.27 284.23 506.38 285.34 511.50 285.55 C516.62 285.76 521.73 285.60 526.85 285.87 C531.97 286.13 537.08 286.90 542.20 287.14 C547.32 287.38 552.43 287.03 557.55 287.30 C562.67 287.56 567.78 288.46 572.90 288.72 C578.02 288.99 583.13 288.83 588.25 288.88 C593.37 288.94 601.04 289.02 603.60 289.04" fill="none" stroke="#b6c1c9" stroke-width="1.25"/><rect x="352.10" y="287.39" width="11.8" height="67.01" fill="#66ff66"/><rect x="367.45" y="287.39" width="11.8" height="67.01" fill="#66ff66"/><rect x="382.80" y="287.39" width="11.8" height="67.01" fill="#66ff66"/><rect x="398.15" y="287.39" width="11.8" height="67.01" fill="#66ff66"/><rect x="413.50" y="287.39" width="11.8" height="67.01" fill="#66ff66"/><rect x="428.85" y="287.39" width="11.8" height="67.01" fill="#66ff66"/><rect x="444.20" y="287.39" width="11.8" height="67.01" fill="#66ff66"/><rect x="459.55" y="287.39" width="11.8" height="67.01" fill="#66ff66"/><rect x="474.90" y="287.39" width="11.8" height="67.01" fill="#66ff66"/><rect x="490.25" y="287.39" width="11.8" height="67.01" fill="#66ff66"/><rect x="505.60" y="287.39" width="11.8" height="67.01" fill="#66ff66"/><rect x="520.95" y="287.39" width="11.8" height="67.01" fill="#66ff66"/><rect x="536.30" y="287.39" width="11.8" height="67.01" fill="#66ff66"/><rect x="551.65" y="287.39" width="11.8" height="67.01" fill="#66ff66"/><rect x="567.00" y="287.39" width="11.8" height="67.01" fill="#66ff66"/><rect x="582.35" y="287.39" width="11.8" height="67.01" fill="#66ff66"/><rect x="597.70" y="287.39" width="11.8" height="67.01" fill="#66ff66"/><line x1="342.7" y1="354.4" x2="618.4" y2="354.4" stroke="#cfcfcf" stroke-width="0.7"/><line x1="358.00" y1="290.42" x2="603.60" y2="290.42" stroke="#1fb61f" stroke-width="1.7" stroke-dasharray="1.9 2.08"/><line x1="358.00" y1="313.68" x2="603.60" y2="313.68" stroke="#cc1f1f" stroke-width="1.7" stroke-dasharray="1.9 2.08"/><rect x="334.8" y="372.4" width="4.4" height="4.4" fill="#e9edf0" stroke="#d6dadd" stroke-width="0.4"/><text x="341.60" y="377.00" font-size="5" fill="#3a3a3a" textLength="31.50" lengthAdjust="spacingAndGlyphs" >Machine Count</text><line x1="392.50" y1="375.00" x2="398.00" y2="375.00" stroke="#1fb61f" stroke-width="1.2" stroke-dasharray="1.6 1.6"/><text x="399.70" y="377.00" font-size="5" fill="#3a3a3a" textLength="68.20" lengthAdjust="spacingAndGlyphs" >UX Good Threshold&#160;&#160;&#160;A&#160;&#160;( 2.75 )</text><line x1="485.50" y1="375.00" x2="491.00" y2="375.00" stroke="#cc1f1f" stroke-width="1.2" stroke-dasharray="1.6 1.6"/><text x="492.30" y="377.00" font-size="5" fill="#3a3a3a" textLength="68.20" lengthAdjust="spacingAndGlyphs" >UX Poor Threshold&#160;&#160;&#160;&#160;C&#160;&#160;( 1.75 )</text><rect x="392.5" y="382.5" width="4.4" height="4.6" fill="#5f7299"/><text x="399.70" y="386.80" font-size="5" fill="#3a3a3a" textLength="73.00" lengthAdjust="spacingAndGlyphs" >UX Score&#160;&#160;&#160;&#160;&#160;Counts: C0 / B0 / A17</text><g transform="translate(324.5,270.0) scale(1.0)"><polygon points="11.86,5.29 11.86,6.71 10.41,6.89 10.09,7.87 11.15,8.87 10.32,10.01 9.04,9.32 8.21,9.92 8.48,11.35 7.14,11.79 6.51,10.47 5.49,10.47 4.86,11.79 3.52,11.35 3.79,9.92 2.96,9.32 1.68,10.01 0.85,8.87 1.91,7.87 1.59,6.89 0.14,6.71 0.14,5.29 1.59,5.11 1.91,4.13 0.85,3.13 1.68,1.99 2.96,2.68 3.79,2.08 3.52,0.65 4.86,0.21 5.49,1.53 6.51,1.53 7.14,0.21 8.48,0.65 8.21,2.08 9.04,2.68 10.32,1.99 11.15,3.13 10.09,4.13 10.41,5.11" fill="#b6b6b6" stroke="#b6b6b6" stroke-width="0.6" stroke-linejoin="round"/><circle cx="6" cy="6" r="3.3" fill="#cdcdcd"/><circle cx="6" cy="6" r="1.25" fill="#f3f3f3"/><circle cx="10.3" cy="9.2" r="3.5" fill="#74b81f" stroke="#5a9a14" stroke-width="0.5"/><path d="M8.4 9.2h3.8M10.3 7.299999999999999v3.8" stroke="#fff" stroke-width="1.2"/></g><text x="801.90" y="279.60" font-size="7.4" fill="#31439b" text-anchor="middle" textLength="159.00" lengthAdjust="spacingAndGlyphs" font-weight="bold" >UX Score with Compute &amp; IO for Today - Date</text><rect x="662.7" y="284.8" width="277.5999999999999" height="69.59999999999997" fill="#fbfbfb"/><line x1="660.7" y1="284.80" x2="942.3" y2="284.80" stroke="#e4e4e4" stroke-width="0.6"/><line x1="660.7" y1="298.72" x2="942.3" y2="298.72" stroke="#e4e4e4" stroke-width="0.6"/><line x1="660.7" y1="312.64" x2="942.3" y2="312.64" stroke="#e4e4e4" stroke-width="0.6"/><line x1="660.7" y1="326.56" x2="942.3" y2="326.56" stroke="#e4e4e4" stroke-width="0.6"/><line x1="660.7" y1="340.48" x2="942.3" y2="340.48" stroke="#e4e4e4" stroke-width="0.6"/><line x1="660.7" y1="354.40" x2="942.3" y2="354.40" stroke="#e4e4e4" stroke-width="0.6"/><line x1="662.7" y1="284.8" x2="662.7" y2="354.4" stroke="#d0d0d0" stroke-width="0.7"/><line x1="940.3" y1="284.8" x2="940.3" y2="354.4" stroke="#d0d0d0" stroke-width="0.7"/><text x="661.10" y="286.60" font-size="5" fill="#333" text-anchor="end" >44</text><text x="661.10" y="300.52" font-size="5" fill="#333" text-anchor="end" >35</text><text x="661.10" y="314.44" font-size="5" fill="#333" text-anchor="end" >26</text><text x="661.10" y="328.36" font-size="5" fill="#333" text-anchor="end" >17</text><text x="661.10" y="342.28" font-size="5" fill="#333" text-anchor="end" >8</text><text x="661.10" y="356.20" font-size="5" fill="#333" text-anchor="end" >0</text><text x="942.40" y="286.60" font-size="5" fill="#333" >3.00</text><text x="942.40" y="300.52" font-size="5" fill="#333" >2.40</text><text x="942.40" y="314.44" font-size="5" fill="#333" >1.80</text><text x="942.40" y="328.36" font-size="5" fill="#333" >1.20</text><text x="942.40" y="342.28" font-size="5" fill="#333" >0.60</text><text x="942.40" y="356.20" font-size="5" fill="#333" >0.00</text><polygon points="669.00,354.40 669.00,292.39 678.10,292.39 693.56,293.82 709.02,292.23 724.48,293.66 739.94,292.39 755.40,292.39 770.86,292.23 786.32,290.81 801.78,287.96 817.24,284.80 832.70,285.75 848.16,286.07 863.62,287.33 879.08,287.49 894.54,288.91 910.00,289.07 925.46,289.23 934.20,289.23 934.20,354.40" fill="#ebeef0"/><text x="650.70" y="318.00" font-size="5.95" fill="#3a5cc0" text-anchor="middle" textLength="39.70" lengthAdjust="spacingAndGlyphs" transform="rotate(-90 650.70 318.00)" >Machine Count</text><text x="959.20" y="325.70" font-size="5.95" fill="#3a5cc0" text-anchor="middle" textLength="70.70" lengthAdjust="spacingAndGlyphs" transform="rotate(-90 959.20 325.70)" >Score&#160;&#160;( C / 1.75+ / 2.75+ )</text><text x="680.10" y="358.00" font-size="5.05" fill="#333" text-anchor="end" transform="rotate(-90 680.10 358.00)" >4:00</text><text x="695.56" y="358.00" font-size="5.05" fill="#333" text-anchor="end" transform="rotate(-90 695.56 358.00)" >0:00</text><text x="711.02" y="358.00" font-size="5.05" fill="#333" text-anchor="end" transform="rotate(-90 711.02 358.00)" >1:00</text><text x="726.48" y="358.00" font-size="5.05" fill="#333" text-anchor="end" transform="rotate(-90 726.48 358.00)" >2:00</text><text x="741.94" y="358.00" font-size="5.05" fill="#333" text-anchor="end" transform="rotate(-90 741.94 358.00)" >3:00</text><text x="757.40" y="358.00" font-size="5.05" fill="#333" text-anchor="end" transform="rotate(-90 757.40 358.00)" >5:00</text><text x="772.86" y="358.00" font-size="5.05" fill="#333" text-anchor="end" transform="rotate(-90 772.86 358.00)" >6:00</text><text x="788.32" y="358.00" font-size="5.05" fill="#333" text-anchor="end" transform="rotate(-90 788.32 358.00)" >7:00</text><text x="803.78" y="358.00" font-size="5.05" fill="#333" text-anchor="end" transform="rotate(-90 803.78 358.00)" >8:00</text><text x="819.24" y="358.00" font-size="5.05" fill="#333" text-anchor="end" transform="rotate(-90 819.24 358.00)" >9:00</text><text x="834.70" y="358.00" font-size="5.05" fill="#333" text-anchor="end" transform="rotate(-90 834.70 358.00)" >10:00</text><text x="850.16" y="358.00" font-size="5.05" fill="#333" text-anchor="end" transform="rotate(-90 850.16 358.00)" >11:00</text><text x="865.62" y="358.00" font-size="5.05" fill="#333" text-anchor="end" transform="rotate(-90 865.62 358.00)" >12:00</text><text x="881.08" y="358.00" font-size="5.05" fill="#333" text-anchor="end" transform="rotate(-90 881.08 358.00)" >13:00</text><text x="896.54" y="358.00" font-size="5.05" fill="#333" text-anchor="end" transform="rotate(-90 896.54 358.00)" >14:00</text><text x="912.00" y="358.00" font-size="5.05" fill="#333" text-anchor="end" transform="rotate(-90 912.00 358.00)" >15:00</text><text x="927.46" y="358.00" font-size="5.05" fill="#333" text-anchor="end" transform="rotate(-90 927.46 358.00)" >16:00</text><path d="M678.10 292.39 C680.68 292.63 688.41 293.84 693.56 293.82 C698.71 293.79 703.87 292.26 709.02 292.23 C714.17 292.21 719.33 293.63 724.48 293.66 C729.63 293.68 734.79 292.60 739.94 292.39 C745.09 292.18 750.25 292.42 755.40 292.39 C760.55 292.37 765.71 292.50 770.86 292.23 C776.01 291.97 781.17 291.52 786.32 290.81 C791.47 290.10 796.63 288.97 801.78 287.96 C806.93 286.96 812.09 285.17 817.24 284.80 C822.39 284.43 827.55 285.54 832.70 285.75 C837.85 285.96 843.01 285.80 848.16 286.07 C853.31 286.33 858.47 287.09 863.62 287.33 C868.77 287.57 873.93 287.23 879.08 287.49 C884.23 287.75 889.39 288.65 894.54 288.91 C899.69 289.18 904.85 289.02 910.00 289.07 C915.15 289.12 922.88 289.20 925.46 289.23" fill="none" stroke="#cfd5da" stroke-width="1.25"/><path d="M678.10 287.12 C680.68 287.00 688.41 286.39 693.56 286.42 C698.71 286.46 703.87 287.27 709.02 287.35 C714.17 287.43 719.33 286.93 724.48 286.89 C729.63 286.85 734.79 287.16 739.94 287.12 C745.09 287.08 750.25 286.66 755.40 286.66 C760.55 286.66 765.71 287.04 770.86 287.12 C776.01 287.20 781.17 287.04 786.32 287.12 C791.47 287.20 796.63 287.70 801.78 287.58 C806.93 287.47 812.09 286.58 817.24 286.42 C822.39 286.27 827.55 286.58 832.70 286.66 C837.85 286.73 843.01 286.81 848.16 286.89 C853.31 286.97 858.47 287.04 863.62 287.12 C868.77 287.20 873.93 287.27 879.08 287.35 C884.23 287.43 889.39 287.55 894.54 287.58 C899.69 287.62 904.85 287.62 910.00 287.58 C915.15 287.55 922.88 287.39 925.46 287.35" fill="none" stroke="#b4b9d8" stroke-width="1.2"/><path d="M678.10 288.05 C680.68 288.01 688.41 287.82 693.56 287.82 C698.71 287.82 703.87 288.05 709.02 288.05 C714.17 288.05 719.33 287.82 724.48 287.82 C729.63 287.82 734.79 288.05 739.94 288.05 C745.09 288.05 750.25 287.82 755.40 287.82 C760.55 287.82 765.71 288.01 770.86 288.05 C776.01 288.09 781.17 288.01 786.32 288.05 C791.47 288.09 796.63 288.32 801.78 288.28 C806.93 288.24 812.09 287.89 817.24 287.82 C822.39 287.74 827.55 287.78 832.70 287.82 C837.85 287.85 843.01 288.01 848.16 288.05 C853.31 288.09 858.47 288.01 863.62 288.05 C868.77 288.09 873.93 288.24 879.08 288.28 C884.23 288.32 889.39 288.24 894.54 288.28 C899.69 288.32 904.85 288.51 910.00 288.51 C915.15 288.51 922.88 288.32 925.46 288.28" fill="none" stroke="#e3bccb" stroke-width="1.2"/><path d="M678.10 287.58 C680.68 287.51 688.41 287.12 693.56 287.12 C698.71 287.12 703.87 287.55 709.02 287.58 C714.17 287.62 719.33 287.35 724.48 287.35 C729.63 287.35 734.79 287.62 739.94 287.58 C745.09 287.55 750.25 287.12 755.40 287.12 C760.55 287.12 765.71 287.51 770.86 287.58 C776.01 287.66 781.17 287.55 786.32 287.58 C791.47 287.62 796.63 287.89 801.78 287.82 C806.93 287.74 812.09 287.24 817.24 287.12 C822.39 287.00 827.55 287.08 832.70 287.12 C837.85 287.16 843.01 287.27 848.16 287.35 C853.31 287.43 858.47 287.51 863.62 287.58 C868.77 287.66 873.93 287.78 879.08 287.82 C884.23 287.85 889.39 287.78 894.54 287.82 C899.69 287.85 904.85 288.05 910.00 288.05 C915.15 288.05 922.88 287.85 925.46 287.82" fill="none" stroke="#7482b4" stroke-width="1.5"/><circle cx="678.10" cy="287.58" r="0.9" fill="#3f5596"/><circle cx="693.56" cy="287.12" r="0.9" fill="#3f5596"/><circle cx="709.02" cy="287.58" r="0.9" fill="#3f5596"/><circle cx="724.48" cy="287.35" r="0.9" fill="#3f5596"/><circle cx="739.94" cy="287.58" r="0.9" fill="#3f5596"/><circle cx="755.40" cy="287.12" r="0.9" fill="#3f5596"/><circle cx="770.86" cy="287.58" r="0.9" fill="#3f5596"/><circle cx="786.32" cy="287.58" r="0.9" fill="#3f5596"/><circle cx="801.78" cy="287.82" r="0.9" fill="#3f5596"/><circle cx="817.24" cy="287.12" r="0.9" fill="#3f5596"/><circle cx="832.70" cy="287.12" r="0.9" fill="#3f5596"/><circle cx="848.16" cy="287.35" r="0.9" fill="#3f5596"/><circle cx="863.62" cy="287.58" r="0.9" fill="#3f5596"/><circle cx="879.08" cy="287.82" r="0.9" fill="#3f5596"/><circle cx="894.54" cy="287.82" r="0.9" fill="#3f5596"/><circle cx="910.00" cy="288.05" r="0.9" fill="#3f5596"/><circle cx="925.46" cy="287.82" r="0.9" fill="#3f5596"/><line x1="678.10" y1="290.60" x2="925.46" y2="290.60" stroke="#1fb61f" stroke-width="1.7" stroke-dasharray="1.9 2.08"/><line x1="678.10" y1="313.80" x2="925.46" y2="313.80" stroke="#cc1f1f" stroke-width="1.7" stroke-dasharray="1.9 2.08"/><line x1="662.7" y1="354.4" x2="940.3" y2="354.4" stroke="#cfcfcf" stroke-width="0.7"/><rect x="655.1" y="372.2" width="4.4" height="4.4" fill="#e9edf0" stroke="#d6dadd" stroke-width="0.4"/><text x="662.00" y="376.80" font-size="5" fill="#3a3a3a" textLength="31.50" lengthAdjust="spacingAndGlyphs" >Machine Count</text><line x1="728.00" y1="374.80" x2="733.50" y2="374.80" stroke="#1fb61f" stroke-width="1.2" stroke-dasharray="1.6 1.6"/><text x="734.80" y="376.80" font-size="5" fill="#3a3a3a" textLength="40.50" lengthAdjust="spacingAndGlyphs" >UX Good Threshold</text><line x1="780.70" y1="374.80" x2="786.20" y2="374.80" stroke="#cc1f1f" stroke-width="1.2" stroke-dasharray="1.6 1.6"/><text x="787.20" y="376.80" font-size="5" fill="#3a3a3a" textLength="39.50" lengthAdjust="spacingAndGlyphs" >UX Poor Threshold</text><line x1="830.5" y1="374.8" x2="837" y2="374.8" stroke="#6d7fae" stroke-width="0.9"/><circle cx="833.7" cy="374.8" r="1" fill="#3f5596"/><text x="839.30" y="376.80" font-size="5" fill="#3a3a3a" textLength="19.50" lengthAdjust="spacingAndGlyphs" >UX Score</text><line x1="728" y1="384.7" x2="733.5" y2="384.7" stroke="#b9bdd9" stroke-width="0.9"/><text x="734.80" y="386.70" font-size="5" fill="#3a3a3a" textLength="34.00" lengthAdjust="spacingAndGlyphs" >UX Compute (y)</text><line x1="780.7" y1="384.7" x2="786.2" y2="384.7" stroke="#e9c3cf" stroke-width="0.9"/><text x="787.20" y="386.70" font-size="5" fill="#3a3a3a" textLength="20.50" lengthAdjust="spacingAndGlyphs" >UX IO (x)</text><g transform="translate(644.5,270.0) scale(1.0)"><polygon points="11.86,5.29 11.86,6.71 10.41,6.89 10.09,7.87 11.15,8.87 10.32,10.01 9.04,9.32 8.21,9.92 8.48,11.35 7.14,11.79 6.51,10.47 5.49,10.47 4.86,11.79 3.52,11.35 3.79,9.92 2.96,9.32 1.68,10.01 0.85,8.87 1.91,7.87 1.59,6.89 0.14,6.71 0.14,5.29 1.59,5.11 1.91,4.13 0.85,3.13 1.68,1.99 2.96,2.68 3.79,2.08 3.52,0.65 4.86,0.21 5.49,1.53 6.51,1.53 7.14,0.21 8.48,0.65 8.21,2.08 9.04,2.68 10.32,1.99 11.15,3.13 10.09,4.13 10.41,5.11" fill="#b6b6b6" stroke="#b6b6b6" stroke-width="0.6" stroke-linejoin="round"/><circle cx="6" cy="6" r="3.3" fill="#cdcdcd"/><circle cx="6" cy="6" r="1.25" fill="#f3f3f3"/><circle cx="10.3" cy="9.2" r="3.5" fill="#74b81f" stroke="#5a9a14" stroke-width="0.5"/><path d="M8.4 9.2h3.8M10.3 7.299999999999999v3.8" stroke="#fff" stroke-width="1.2"/></g><text x="162.70" y="405.10" font-size="7.4" fill="#31439b" text-anchor="middle" textLength="137.00" lengthAdjust="spacingAndGlyphs" font-weight="bold" >Application Load Time for Today - Date</text><rect x="22.1" y="410.1" width="281.5" height="79.5" fill="#fbfbfb"/><line x1="20.1" y1="410.10" x2="305.6" y2="410.10" stroke="#e4e4e4" stroke-width="0.6"/><line x1="20.1" y1="426.00" x2="305.6" y2="426.00" stroke="#e4e4e4" stroke-width="0.6"/><line x1="20.1" y1="441.90" x2="305.6" y2="441.90" stroke="#e4e4e4" stroke-width="0.6"/><line x1="20.1" y1="457.80" x2="305.6" y2="457.80" stroke="#e4e4e4" stroke-width="0.6"/><line x1="20.1" y1="473.70" x2="305.6" y2="473.70" stroke="#e4e4e4" stroke-width="0.6"/><line x1="20.1" y1="489.60" x2="305.6" y2="489.60" stroke="#e4e4e4" stroke-width="0.6"/><line x1="22.1" y1="410.1" x2="22.1" y2="489.6" stroke="#d0d0d0" stroke-width="0.7"/><line x1="303.6" y1="410.1" x2="303.6" y2="489.6" stroke="#d0d0d0" stroke-width="0.7"/><text x="20.40" y="411.90" font-size="5" fill="#333" text-anchor="end" >44</text><text x="20.40" y="427.80" font-size="5" fill="#333" text-anchor="end" >35</text><text x="20.40" y="443.70" font-size="5" fill="#333" text-anchor="end" >26</text><text x="20.40" y="459.60" font-size="5" fill="#333" text-anchor="end" >17</text><text x="20.40" y="475.50" font-size="5" fill="#333" text-anchor="end" >8</text><text x="20.40" y="491.40" font-size="5" fill="#333" text-anchor="end" >0</text><text x="305.70" y="411.90" font-size="5" fill="#333" >18</text><text x="305.70" y="427.80" font-size="5" fill="#333" >14</text><text x="305.70" y="443.70" font-size="5" fill="#333" >11</text><text x="305.70" y="459.60" font-size="5" fill="#333" >7</text><text x="305.70" y="475.50" font-size="5" fill="#333" >3</text><text x="305.70" y="491.40" font-size="5" fill="#333" >0</text><polygon points="28.70,489.60 28.70,418.77 37.55,418.77 53.20,420.40 68.85,418.59 84.50,420.22 100.15,418.77 115.80,418.77 131.45,418.59 147.10,416.97 162.75,413.71 178.40,410.10 194.05,411.18 209.70,411.55 225.35,412.99 241.00,413.17 256.65,414.80 272.30,414.98 287.95,415.16 297.30,415.16 297.30,489.60" fill="#ebeef0"/><text x="10.70" y="451.30" font-size="5.95" fill="#3a5cc0" text-anchor="middle" textLength="63.00" lengthAdjust="spacingAndGlyphs" transform="rotate(-90 10.70 451.30)" >Machine Count&#160;&#160;( area )</text><text x="318.30" y="454.10" font-size="5.95" fill="#3a5cc0" text-anchor="middle" textLength="75.70" lengthAdjust="spacingAndGlyphs" transform="rotate(-90 318.30 454.10)" >Load Time Seconds&#160;&#160;( bars )</text><text x="39.55" y="493.20" font-size="5.05" fill="#333" text-anchor="end" transform="rotate(-90 39.55 493.20)" >0:00</text><text x="55.20" y="493.20" font-size="5.05" fill="#333" text-anchor="end" transform="rotate(-90 55.20 493.20)" >1:00</text><text x="70.85" y="493.20" font-size="5.05" fill="#333" text-anchor="end" transform="rotate(-90 70.85 493.20)" >2:00</text><text x="86.50" y="493.20" font-size="5.05" fill="#333" text-anchor="end" transform="rotate(-90 86.50 493.20)" >3:00</text><text x="102.15" y="493.20" font-size="5.05" fill="#333" text-anchor="end" transform="rotate(-90 102.15 493.20)" >4:00</text><text x="117.80" y="493.20" font-size="5.05" fill="#333" text-anchor="end" transform="rotate(-90 117.80 493.20)" >5:00</text><text x="133.45" y="493.20" font-size="5.05" fill="#333" text-anchor="end" transform="rotate(-90 133.45 493.20)" >6:00</text><text x="149.10" y="493.20" font-size="5.05" fill="#333" text-anchor="end" transform="rotate(-90 149.10 493.20)" >7:00</text><text x="164.75" y="493.20" font-size="5.05" fill="#333" text-anchor="end" transform="rotate(-90 164.75 493.20)" >8:00</text><text x="180.40" y="493.20" font-size="5.05" fill="#333" text-anchor="end" transform="rotate(-90 180.40 493.20)" >9:00</text><text x="196.05" y="493.20" font-size="5.05" fill="#333" text-anchor="end" transform="rotate(-90 196.05 493.20)" >10:00</text><text x="211.70" y="493.20" font-size="5.05" fill="#333" text-anchor="end" transform="rotate(-90 211.70 493.20)" >11:00</text><text x="227.35" y="493.20" font-size="5.05" fill="#333" text-anchor="end" transform="rotate(-90 227.35 493.20)" >12:00</text><text x="243.00" y="493.20" font-size="5.05" fill="#333" text-anchor="end" transform="rotate(-90 243.00 493.20)" >13:00</text><text x="258.65" y="493.20" font-size="5.05" fill="#333" text-anchor="end" transform="rotate(-90 258.65 493.20)" >14:00</text><text x="274.30" y="493.20" font-size="5.05" fill="#333" text-anchor="end" transform="rotate(-90 274.30 493.20)" >15:00</text><text x="289.95" y="493.20" font-size="5.05" fill="#333" text-anchor="end" transform="rotate(-90 289.95 493.20)" >16:00</text><path d="M37.55 418.77 C40.16 419.04 47.98 420.43 53.20 420.40 C58.42 420.37 63.63 418.62 68.85 418.59 C74.07 418.56 79.28 420.19 84.50 420.22 C89.72 420.25 94.93 419.01 100.15 418.77 C105.37 418.53 110.58 418.80 115.80 418.77 C121.02 418.74 126.23 418.89 131.45 418.59 C136.67 418.29 141.88 417.78 147.10 416.97 C152.32 416.15 157.53 414.86 162.75 413.71 C167.97 412.57 173.18 410.52 178.40 410.10 C183.62 409.68 188.83 410.94 194.05 411.18 C199.27 411.43 204.48 411.24 209.70 411.55 C214.92 411.85 220.13 412.72 225.35 412.99 C230.57 413.26 235.78 412.87 241.00 413.17 C246.22 413.47 251.43 414.50 256.65 414.80 C261.87 415.10 267.08 414.92 272.30 414.98 C277.52 415.04 285.34 415.13 287.95 415.16" fill="none" stroke="#b6c1c9" stroke-width="1.25"/><rect x="47.30" y="472.03" width="11.8" height="17.57" fill="#6a7ea0"/><rect x="62.95" y="482.84" width="11.8" height="6.76" fill="#6a7ea0"/><rect x="78.60" y="481.83" width="11.8" height="7.77" fill="#6a7ea0"/><rect x="94.25" y="479.46" width="11.8" height="10.14" fill="#6a7ea0"/><rect x="125.55" y="480.48" width="11.8" height="9.12" fill="#6a7ea0"/><rect x="141.20" y="410.21" width="11.8" height="79.39" fill="#6a7ea0"/><rect x="156.85" y="481.15" width="11.8" height="8.45" fill="#6a7ea0"/><rect x="172.50" y="476.09" width="11.8" height="13.51" fill="#6a7ea0"/><rect x="188.15" y="481.15" width="11.8" height="8.45" fill="#6a7ea0"/><rect x="203.80" y="478.79" width="11.8" height="10.81" fill="#6a7ea0"/><rect x="219.45" y="471.02" width="11.8" height="18.58" fill="#6a7ea0"/><rect x="235.10" y="473.05" width="11.8" height="16.55" fill="#6a7ea0"/><rect x="250.75" y="476.42" width="11.8" height="13.18" fill="#6a7ea0"/><rect x="266.40" y="481.15" width="11.8" height="8.45" fill="#6a7ea0"/><rect x="282.05" y="482.17" width="11.8" height="7.43" fill="#6a7ea0"/><line x1="22.1" y1="489.6" x2="303.6" y2="489.6" stroke="#cfcfcf" stroke-width="0.7"/><rect x="14.8" y="507.6" width="4.4" height="4.4" fill="#e9edf0" stroke="#d6dadd" stroke-width="0.4"/><text x="21.60" y="512.20" font-size="5" fill="#3a3a3a" textLength="31.50" lengthAdjust="spacingAndGlyphs" >Machine Count</text><rect x="143.6" y="507.90000000000003" width="4.4" height="4.6" fill="#5f7299"/><text x="151.00" y="512.20" font-size="5" fill="#3a3a3a" textLength="31.50" lengthAdjust="spacingAndGlyphs" >App Load Time</text><g transform="translate(4.2,396.0) scale(1.0)"><polygon points="11.86,5.29 11.86,6.71 10.41,6.89 10.09,7.87 11.15,8.87 10.32,10.01 9.04,9.32 8.21,9.92 8.48,11.35 7.14,11.79 6.51,10.47 5.49,10.47 4.86,11.79 3.52,11.35 3.79,9.92 2.96,9.32 1.68,10.01 0.85,8.87 1.91,7.87 1.59,6.89 0.14,6.71 0.14,5.29 1.59,5.11 1.91,4.13 0.85,3.13 1.68,1.99 2.96,2.68 3.79,2.08 3.52,0.65 4.86,0.21 5.49,1.53 6.51,1.53 7.14,0.21 8.48,0.65 8.21,2.08 9.04,2.68 10.32,1.99 11.15,3.13 10.09,4.13 10.41,5.11" fill="#b6b6b6" stroke="#b6b6b6" stroke-width="0.6" stroke-linejoin="round"/><circle cx="6" cy="6" r="3.3" fill="#cdcdcd"/><circle cx="6" cy="6" r="1.25" fill="#f3f3f3"/><circle cx="10.3" cy="9.2" r="3.5" fill="#74b81f" stroke="#5a9a14" stroke-width="0.5"/><path d="M8.4 9.2h3.8M10.3 7.299999999999999v3.8" stroke="#fff" stroke-width="1.2"/></g><text x="481.00" y="405.10" font-size="7.4" fill="#31439b" text-anchor="middle" textLength="98.00" lengthAdjust="spacingAndGlyphs" font-weight="bold" >CPU Queue for Today - Date</text><rect x="342.4" y="410.1" width="276.4" height="79.5" fill="#fbfbfb"/><line x1="340.4" y1="410.10" x2="620.8" y2="410.10" stroke="#e4e4e4" stroke-width="0.6"/><line x1="340.4" y1="426.00" x2="620.8" y2="426.00" stroke="#e4e4e4" stroke-width="0.6"/><line x1="340.4" y1="441.90" x2="620.8" y2="441.90" stroke="#e4e4e4" stroke-width="0.6"/><line x1="340.4" y1="457.80" x2="620.8" y2="457.80" stroke="#e4e4e4" stroke-width="0.6"/><line x1="340.4" y1="473.70" x2="620.8" y2="473.70" stroke="#e4e4e4" stroke-width="0.6"/><line x1="340.4" y1="489.60" x2="620.8" y2="489.60" stroke="#e4e4e4" stroke-width="0.6"/><line x1="342.4" y1="410.1" x2="342.4" y2="489.6" stroke="#d0d0d0" stroke-width="0.7"/><line x1="618.8" y1="410.1" x2="618.8" y2="489.6" stroke="#d0d0d0" stroke-width="0.7"/><text x="341.00" y="411.90" font-size="5" fill="#333" text-anchor="end" >44</text><text x="341.00" y="427.80" font-size="5" fill="#333" text-anchor="end" >35</text><text x="341.00" y="443.70" font-size="5" fill="#333" text-anchor="end" >26</text><text x="341.00" y="459.60" font-size="5" fill="#333" text-anchor="end" >17</text><text x="341.00" y="475.50" font-size="5" fill="#333" text-anchor="end" >8</text><text x="341.00" y="491.40" font-size="5" fill="#333" text-anchor="end" >0</text><text x="620.90" y="411.90" font-size="5" fill="#333" >3.00</text><text x="620.90" y="427.80" font-size="5" fill="#333" >2.40</text><text x="620.90" y="443.70" font-size="5" fill="#333" >1.80</text><text x="620.90" y="459.60" font-size="5" fill="#333" >1.20</text><text x="620.90" y="475.50" font-size="5" fill="#333" >0.60</text><text x="620.90" y="491.40" font-size="5" fill="#333" >0.00</text><polygon points="348.70,489.60 348.70,418.77 358.00,418.77 373.37,420.40 388.74,418.59 404.11,420.22 419.48,418.77 434.85,418.77 450.22,418.59 465.59,416.97 480.96,413.71 496.33,410.10 511.70,411.18 527.07,411.55 542.44,412.99 557.81,413.17 573.18,414.80 588.55,414.98 603.92,415.16 613.20,415.16 613.20,489.60" fill="#ebeef0"/><text x="330.70" y="451.20" font-size="5.95" fill="#3a5cc0" text-anchor="middle" textLength="64.00" lengthAdjust="spacingAndGlyphs" transform="rotate(-90 330.70 451.20)" >Machine Count&#160;&#160;( area )</text><text x="638.40" y="449.30" font-size="5.95" fill="#3a5cc0" text-anchor="middle" textLength="56.50" lengthAdjust="spacingAndGlyphs" transform="rotate(-90 638.40 449.30)" >CPU Queue&#160;&#160;( bars )</text><text x="360.00" y="493.20" font-size="5.05" fill="#333" text-anchor="end" transform="rotate(-90 360.00 493.20)" >0:00</text><text x="375.37" y="493.20" font-size="5.05" fill="#333" text-anchor="end" transform="rotate(-90 375.37 493.20)" >1:00</text><text x="390.74" y="493.20" font-size="5.05" fill="#333" text-anchor="end" transform="rotate(-90 390.74 493.20)" >2:00</text><text x="406.11" y="493.20" font-size="5.05" fill="#333" text-anchor="end" transform="rotate(-90 406.11 493.20)" >3:00</text><text x="421.48" y="493.20" font-size="5.05" fill="#333" text-anchor="end" transform="rotate(-90 421.48 493.20)" >4:00</text><text x="436.85" y="493.20" font-size="5.05" fill="#333" text-anchor="end" transform="rotate(-90 436.85 493.20)" >5:00</text><text x="452.22" y="493.20" font-size="5.05" fill="#333" text-anchor="end" transform="rotate(-90 452.22 493.20)" >6:00</text><text x="467.59" y="493.20" font-size="5.05" fill="#333" text-anchor="end" transform="rotate(-90 467.59 493.20)" >7:00</text><text x="482.96" y="493.20" font-size="5.05" fill="#333" text-anchor="end" transform="rotate(-90 482.96 493.20)" >8:00</text><text x="498.33" y="493.20" font-size="5.05" fill="#333" text-anchor="end" transform="rotate(-90 498.33 493.20)" >9:00</text><text x="513.70" y="493.20" font-size="5.05" fill="#333" text-anchor="end" transform="rotate(-90 513.70 493.20)" >10:00</text><text x="529.07" y="493.20" font-size="5.05" fill="#333" text-anchor="end" transform="rotate(-90 529.07 493.20)" >11:00</text><text x="544.44" y="493.20" font-size="5.05" fill="#333" text-anchor="end" transform="rotate(-90 544.44 493.20)" >12:00</text><text x="559.81" y="493.20" font-size="5.05" fill="#333" text-anchor="end" transform="rotate(-90 559.81 493.20)" >13:00</text><text x="575.18" y="493.20" font-size="5.05" fill="#333" text-anchor="end" transform="rotate(-90 575.18 493.20)" >14:00</text><text x="590.55" y="493.20" font-size="5.05" fill="#333" text-anchor="end" transform="rotate(-90 590.55 493.20)" >15:00</text><text x="605.92" y="493.20" font-size="5.05" fill="#333" text-anchor="end" transform="rotate(-90 605.92 493.20)" >16:00</text><path d="M358.00 418.77 C360.56 419.04 368.25 420.43 373.37 420.40 C378.49 420.37 383.62 418.62 388.74 418.59 C393.86 418.56 398.99 420.19 404.11 420.22 C409.23 420.25 414.36 419.01 419.48 418.77 C424.60 418.53 429.73 418.80 434.85 418.77 C439.97 418.74 445.10 418.89 450.22 418.59 C455.34 418.29 460.47 417.78 465.59 416.97 C470.71 416.15 475.84 414.86 480.96 413.71 C486.08 412.57 491.21 410.52 496.33 410.10 C501.45 409.68 506.58 410.94 511.70 411.18 C516.82 411.43 521.95 411.24 527.07 411.55 C532.19 411.85 537.32 412.72 542.44 412.99 C547.56 413.26 552.69 412.87 557.81 413.17 C562.93 413.47 568.06 414.50 573.18 414.80 C578.30 415.10 583.43 414.92 588.55 414.98 C593.67 415.04 601.36 415.13 603.92 415.16" fill="none" stroke="#b6c1c9" stroke-width="1.25"/><rect x="352.10" y="460.21" width="11.8" height="29.39" fill="#6a7ea0"/><rect x="367.47" y="449.74" width="11.8" height="39.86" fill="#6a7ea0"/><rect x="382.84" y="444.33" width="11.8" height="45.27" fill="#6a7ea0"/><rect x="398.21" y="455.14" width="11.8" height="34.46" fill="#6a7ea0"/><rect x="413.58" y="447.03" width="11.8" height="42.57" fill="#6a7ea0"/><rect x="428.95" y="455.14" width="11.8" height="34.46" fill="#6a7ea0"/><rect x="444.32" y="452.44" width="11.8" height="37.16" fill="#6a7ea0"/><rect x="459.69" y="449.74" width="11.8" height="39.86" fill="#6a7ea0"/><rect x="475.06" y="447.03" width="11.8" height="42.57" fill="#6a7ea0"/><rect x="490.43" y="452.44" width="11.8" height="37.16" fill="#6a7ea0"/><rect x="505.80" y="460.21" width="11.8" height="29.39" fill="#6a7ea0"/><rect x="521.17" y="460.21" width="11.8" height="29.39" fill="#6a7ea0"/><rect x="536.54" y="455.14" width="11.8" height="34.46" fill="#6a7ea0"/><rect x="551.91" y="444.33" width="11.8" height="45.27" fill="#6a7ea0"/><rect x="567.28" y="455.14" width="11.8" height="34.46" fill="#6a7ea0"/><rect x="582.65" y="449.74" width="11.8" height="39.86" fill="#6a7ea0"/><rect x="598.02" y="460.21" width="11.8" height="29.39" fill="#6a7ea0"/><line x1="342.4" y1="489.6" x2="618.8" y2="489.6" stroke="#cfcfcf" stroke-width="0.7"/><rect x="334.8" y="507.6" width="4.4" height="4.4" fill="#e9edf0" stroke="#d6dadd" stroke-width="0.4"/><text x="341.60" y="512.20" font-size="5" fill="#3a3a3a" textLength="31.50" lengthAdjust="spacingAndGlyphs" >Machine Count</text><rect x="464.6" y="507.90000000000003" width="4.4" height="4.6" fill="#5f7299"/><text x="471.40" y="512.20" font-size="5" fill="#3a3a3a" textLength="24.00" lengthAdjust="spacingAndGlyphs" >CPU Queue</text><g transform="translate(324.5,396.0) scale(1.0)"><polygon points="11.86,5.29 11.86,6.71 10.41,6.89 10.09,7.87 11.15,8.87 10.32,10.01 9.04,9.32 8.21,9.92 8.48,11.35 7.14,11.79 6.51,10.47 5.49,10.47 4.86,11.79 3.52,11.35 3.79,9.92 2.96,9.32 1.68,10.01 0.85,8.87 1.91,7.87 1.59,6.89 0.14,6.71 0.14,5.29 1.59,5.11 1.91,4.13 0.85,3.13 1.68,1.99 2.96,2.68 3.79,2.08 3.52,0.65 4.86,0.21 5.49,1.53 6.51,1.53 7.14,0.21 8.48,0.65 8.21,2.08 9.04,2.68 10.32,1.99 11.15,3.13 10.09,4.13 10.41,5.11" fill="#b6b6b6" stroke="#b6b6b6" stroke-width="0.6" stroke-linejoin="round"/><circle cx="6" cy="6" r="3.3" fill="#cdcdcd"/><circle cx="6" cy="6" r="1.25" fill="#f3f3f3"/><circle cx="10.3" cy="9.2" r="3.5" fill="#74b81f" stroke="#5a9a14" stroke-width="0.5"/><path d="M8.4 9.2h3.8M10.3 7.299999999999999v3.8" stroke="#fff" stroke-width="1.2"/></g><text x="803.40" y="405.10" font-size="7.4" fill="#31439b" text-anchor="middle" textLength="132.00" lengthAdjust="spacingAndGlyphs" font-weight="bold" >CPU % Peak Average for Today - Date</text><rect x="663.0" y="410.1" width="281.5" height="69.69999999999999" fill="#fbfbfb"/><line x1="661.0" y1="410.10" x2="946.5" y2="410.10" stroke="#e4e4e4" stroke-width="0.6"/><line x1="661.0" y1="424.04" x2="946.5" y2="424.04" stroke="#e4e4e4" stroke-width="0.6"/><line x1="661.0" y1="437.98" x2="946.5" y2="437.98" stroke="#e4e4e4" stroke-width="0.6"/><line x1="661.0" y1="451.92" x2="946.5" y2="451.92" stroke="#e4e4e4" stroke-width="0.6"/><line x1="661.0" y1="465.86" x2="946.5" y2="465.86" stroke="#e4e4e4" stroke-width="0.6"/><line x1="661.0" y1="479.80" x2="946.5" y2="479.80" stroke="#e4e4e4" stroke-width="0.6"/><line x1="663.0" y1="410.1" x2="663.0" y2="479.8" stroke="#d0d0d0" stroke-width="0.7"/><line x1="944.5" y1="410.1" x2="944.5" y2="479.8" stroke="#d0d0d0" stroke-width="0.7"/><text x="661.00" y="411.90" font-size="5" fill="#333" text-anchor="end" >44</text><text x="661.00" y="425.84" font-size="5" fill="#333" text-anchor="end" >35</text><text x="661.00" y="439.78" font-size="5" fill="#333" text-anchor="end" >26</text><text x="661.00" y="453.72" font-size="5" fill="#333" text-anchor="end" >17</text><text x="661.00" y="467.66" font-size="5" fill="#333" text-anchor="end" >8</text><text x="661.00" y="481.60" font-size="5" fill="#333" text-anchor="end" >0</text><text x="946.60" y="411.90" font-size="5" fill="#333" >77</text><text x="946.60" y="425.84" font-size="5" fill="#333" >62</text><text x="946.60" y="439.78" font-size="5" fill="#333" >46</text><text x="946.60" y="453.72" font-size="5" fill="#333" >31</text><text x="946.60" y="467.66" font-size="5" fill="#333" >15</text><text x="946.60" y="481.60" font-size="5" fill="#333" >0</text><polygon points="669.30,479.80 669.30,417.70 678.00,417.70 693.67,419.13 709.34,417.55 725.01,418.97 740.68,417.70 756.35,417.70 772.02,417.55 787.69,416.12 803.36,413.27 819.03,410.10 834.70,411.05 850.37,411.37 866.04,412.63 881.71,412.79 897.38,414.22 913.05,414.38 928.72,414.54 937.50,414.54 937.50,479.80" fill="#ebeef0"/><text x="650.70" y="448.90" font-size="5.95" fill="#3a5cc0" text-anchor="middle" textLength="63.20" lengthAdjust="spacingAndGlyphs" transform="rotate(-90 650.70 448.90)" >Machine Count&#160;&#160;( area )</text><text x="959.30" y="455.10" font-size="5.95" fill="#3a5cc0" text-anchor="middle" textLength="87.20" lengthAdjust="spacingAndGlyphs" transform="rotate(-90 959.30 455.10)" >CPU Used % Avg | Peak&#160;&#160;( bars )</text><text x="680.00" y="483.40" font-size="5.05" fill="#333" text-anchor="end" transform="rotate(-90 680.00 483.40)" >0:00</text><text x="695.67" y="483.40" font-size="5.05" fill="#333" text-anchor="end" transform="rotate(-90 695.67 483.40)" >1:00</text><text x="711.34" y="483.40" font-size="5.05" fill="#333" text-anchor="end" transform="rotate(-90 711.34 483.40)" >2:00</text><text x="727.01" y="483.40" font-size="5.05" fill="#333" text-anchor="end" transform="rotate(-90 727.01 483.40)" >3:00</text><text x="742.68" y="483.40" font-size="5.05" fill="#333" text-anchor="end" transform="rotate(-90 742.68 483.40)" >4:00</text><text x="758.35" y="483.40" font-size="5.05" fill="#333" text-anchor="end" transform="rotate(-90 758.35 483.40)" >5:00</text><text x="774.02" y="483.40" font-size="5.05" fill="#333" text-anchor="end" transform="rotate(-90 774.02 483.40)" >6:00</text><text x="789.69" y="483.40" font-size="5.05" fill="#333" text-anchor="end" transform="rotate(-90 789.69 483.40)" >7:00</text><text x="805.36" y="483.40" font-size="5.05" fill="#333" text-anchor="end" transform="rotate(-90 805.36 483.40)" >8:00</text><text x="821.03" y="483.40" font-size="5.05" fill="#333" text-anchor="end" transform="rotate(-90 821.03 483.40)" >9:00</text><text x="836.70" y="483.40" font-size="5.05" fill="#333" text-anchor="end" transform="rotate(-90 836.70 483.40)" >10:00</text><text x="852.37" y="483.40" font-size="5.05" fill="#333" text-anchor="end" transform="rotate(-90 852.37 483.40)" >11:00</text><text x="868.04" y="483.40" font-size="5.05" fill="#333" text-anchor="end" transform="rotate(-90 868.04 483.40)" >12:00</text><text x="883.71" y="483.40" font-size="5.05" fill="#333" text-anchor="end" transform="rotate(-90 883.71 483.40)" >13:00</text><text x="899.38" y="483.40" font-size="5.05" fill="#333" text-anchor="end" transform="rotate(-90 899.38 483.40)" >14:00</text><text x="915.05" y="483.40" font-size="5.05" fill="#333" text-anchor="end" transform="rotate(-90 915.05 483.40)" >15:00</text><text x="930.72" y="483.40" font-size="5.05" fill="#333" text-anchor="end" transform="rotate(-90 930.72 483.40)" >16:00</text><path d="M678.00 417.70 C680.61 417.94 688.45 419.16 693.67 419.13 C698.89 419.10 704.12 417.57 709.34 417.55 C714.56 417.52 719.79 418.94 725.01 418.97 C730.23 419.00 735.46 417.91 740.68 417.70 C745.90 417.49 751.13 417.73 756.35 417.70 C761.57 417.68 766.80 417.81 772.02 417.55 C777.24 417.28 782.47 416.83 787.69 416.12 C792.91 415.41 798.14 414.27 803.36 413.27 C808.58 412.26 813.81 410.47 819.03 410.10 C824.25 409.73 829.48 410.84 834.70 411.05 C839.92 411.26 845.15 411.10 850.37 411.37 C855.59 411.63 860.82 412.40 866.04 412.63 C871.26 412.87 876.49 412.53 881.71 412.79 C886.93 413.06 892.16 413.95 897.38 414.22 C902.60 414.48 907.83 414.32 913.05 414.38 C918.27 414.43 926.11 414.51 928.72 414.54" fill="none" stroke="#b6c1c9" stroke-width="1.25"/><rect x="672.00" y="417.00" width="12.0" height="28.97" fill="#2d3459"/><rect x="672.00" y="445.96" width="12.0" height="27.24" fill="#3a4ea6"/><rect x="672.00" y="473.20" width="12.0" height="2.41" fill="#456cc0"/><rect x="672.00" y="475.62" width="12.0" height="2.07" fill="#6482b8"/><rect x="672.00" y="477.69" width="12.0" height="2.07" fill="#8db3e6"/><rect x="687.67" y="410.10" width="12.0" height="40.34" fill="#2d3459"/><rect x="687.67" y="450.44" width="12.0" height="22.76" fill="#3a4ea6"/><rect x="687.67" y="473.20" width="12.0" height="2.41" fill="#456cc0"/><rect x="687.67" y="475.62" width="12.0" height="2.07" fill="#6482b8"/><rect x="687.67" y="477.69" width="12.0" height="2.07" fill="#8db3e6"/><rect x="703.34" y="453.55" width="12.0" height="7.24" fill="#2d3459"/><rect x="703.34" y="460.79" width="12.0" height="12.41" fill="#3a4ea6"/><rect x="703.34" y="473.20" width="12.0" height="2.41" fill="#456cc0"/><rect x="703.34" y="475.62" width="12.0" height="2.07" fill="#6482b8"/><rect x="703.34" y="477.69" width="12.0" height="2.07" fill="#8db3e6"/><rect x="719.01" y="449.07" width="12.0" height="8.97" fill="#2d3459"/><rect x="719.01" y="458.03" width="12.0" height="15.17" fill="#3a4ea6"/><rect x="719.01" y="473.20" width="12.0" height="2.41" fill="#456cc0"/><rect x="719.01" y="475.62" width="12.0" height="2.07" fill="#6482b8"/><rect x="719.01" y="477.69" width="12.0" height="2.07" fill="#8db3e6"/><rect x="734.68" y="447.69" width="12.0" height="11.38" fill="#2d3459"/><rect x="734.68" y="459.07" width="12.0" height="14.14" fill="#3a4ea6"/><rect x="734.68" y="473.20" width="12.0" height="2.41" fill="#456cc0"/><rect x="734.68" y="475.62" width="12.0" height="2.07" fill="#6482b8"/><rect x="734.68" y="477.69" width="12.0" height="2.07" fill="#8db3e6"/><rect x="750.35" y="452.86" width="12.0" height="7.93" fill="#2d3459"/><rect x="750.35" y="460.79" width="12.0" height="12.41" fill="#3a4ea6"/><rect x="750.35" y="473.20" width="12.0" height="2.41" fill="#456cc0"/><rect x="750.35" y="475.62" width="12.0" height="2.07" fill="#6482b8"/><rect x="750.35" y="477.69" width="12.0" height="2.07" fill="#8db3e6"/><rect x="766.02" y="442.17" width="12.0" height="17.59" fill="#2d3459"/><rect x="766.02" y="459.76" width="12.0" height="13.45" fill="#3a4ea6"/><rect x="766.02" y="473.20" width="12.0" height="2.41" fill="#456cc0"/><rect x="766.02" y="475.62" width="12.0" height="2.07" fill="#6482b8"/><rect x="766.02" y="477.69" width="12.0" height="2.07" fill="#8db3e6"/><rect x="781.69" y="417.69" width="12.0" height="34.83" fill="#2d3459"/><rect x="781.69" y="452.51" width="12.0" height="20.69" fill="#3a4ea6"/><rect x="781.69" y="473.20" width="12.0" height="2.41" fill="#456cc0"/><rect x="781.69" y="475.62" width="12.0" height="2.07" fill="#6482b8"/><rect x="781.69" y="477.69" width="12.0" height="2.07" fill="#8db3e6"/><rect x="797.36" y="435.27" width="12.0" height="22.07" fill="#2d3459"/><rect x="797.36" y="457.34" width="12.0" height="15.86" fill="#3a4ea6"/><rect x="797.36" y="473.20" width="12.0" height="2.41" fill="#456cc0"/><rect x="797.36" y="475.62" width="12.0" height="2.07" fill="#6482b8"/><rect x="797.36" y="477.69" width="12.0" height="2.07" fill="#8db3e6"/><rect x="813.03" y="438.03" width="12.0" height="22.76" fill="#2d3459"/><rect x="813.03" y="460.79" width="12.0" height="12.41" fill="#3a4ea6"/><rect x="813.03" y="473.20" width="12.0" height="2.41" fill="#456cc0"/><rect x="813.03" y="475.62" width="12.0" height="2.07" fill="#6482b8"/><rect x="813.03" y="477.69" width="12.0" height="2.07" fill="#8db3e6"/><rect x="828.70" y="453.20" width="12.0" height="7.59" fill="#2d3459"/><rect x="828.70" y="460.79" width="12.0" height="12.41" fill="#3a4ea6"/><rect x="828.70" y="473.20" width="12.0" height="2.41" fill="#456cc0"/><rect x="828.70" y="475.62" width="12.0" height="2.07" fill="#6482b8"/><rect x="828.70" y="477.69" width="12.0" height="2.07" fill="#8db3e6"/><rect x="844.37" y="454.24" width="12.0" height="7.59" fill="#2d3459"/><rect x="844.37" y="461.82" width="12.0" height="11.38" fill="#3a4ea6"/><rect x="844.37" y="473.20" width="12.0" height="2.41" fill="#456cc0"/><rect x="844.37" y="475.62" width="12.0" height="2.07" fill="#6482b8"/><rect x="844.37" y="477.69" width="12.0" height="2.07" fill="#8db3e6"/><rect x="860.04" y="452.51" width="12.0" height="10.69" fill="#2d3459"/><rect x="860.04" y="463.20" width="12.0" height="10.00" fill="#3a4ea6"/><rect x="860.04" y="473.20" width="12.0" height="2.41" fill="#456cc0"/><rect x="860.04" y="475.62" width="12.0" height="2.07" fill="#6482b8"/><rect x="860.04" y="477.69" width="12.0" height="2.07" fill="#8db3e6"/><rect x="875.71" y="450.79" width="12.0" height="11.72" fill="#2d3459"/><rect x="875.71" y="462.51" width="12.0" height="10.69" fill="#3a4ea6"/><rect x="875.71" y="473.20" width="12.0" height="2.41" fill="#456cc0"/><rect x="875.71" y="475.62" width="12.0" height="2.07" fill="#6482b8"/><rect x="875.71" y="477.69" width="12.0" height="2.07" fill="#8db3e6"/><rect x="891.38" y="451.82" width="12.0" height="10.00" fill="#2d3459"/><rect x="891.38" y="461.82" width="12.0" height="11.38" fill="#3a4ea6"/><rect x="891.38" y="473.20" width="12.0" height="2.41" fill="#456cc0"/><rect x="891.38" y="475.62" width="12.0" height="2.07" fill="#6482b8"/><rect x="891.38" y="477.69" width="12.0" height="2.07" fill="#8db3e6"/><rect x="907.05" y="452.17" width="12.0" height="11.03" fill="#2d3459"/><rect x="907.05" y="463.20" width="12.0" height="10.00" fill="#3a4ea6"/><rect x="907.05" y="473.20" width="12.0" height="2.41" fill="#456cc0"/><rect x="907.05" y="475.62" width="12.0" height="2.07" fill="#6482b8"/><rect x="907.05" y="477.69" width="12.0" height="2.07" fill="#8db3e6"/><rect x="922.72" y="453.89" width="12.0" height="9.31" fill="#2d3459"/><rect x="922.72" y="463.20" width="12.0" height="10.00" fill="#3a4ea6"/><rect x="922.72" y="473.20" width="12.0" height="2.41" fill="#456cc0"/><rect x="922.72" y="475.62" width="12.0" height="2.07" fill="#6482b8"/><rect x="922.72" y="477.69" width="12.0" height="2.07" fill="#8db3e6"/><line x1="663.0" y1="479.8" x2="944.5" y2="479.8" stroke="#cfcfcf" stroke-width="0.7"/><rect x="655.1" y="498.2" width="4.4" height="4.4" fill="#e9edf0" stroke="#d6dadd" stroke-width="0.4"/><text x="662.00" y="502.80" font-size="5" fill="#3a3a3a" textLength="31.50" lengthAdjust="spacingAndGlyphs" >Machine Count</text><rect x="725.2" y="498.5" width="4.4" height="4.6" fill="#2d3459"/><text x="732.20" y="502.80" font-size="5" fill="#3a3a3a" textLength="42.00" lengthAdjust="spacingAndGlyphs" >Peak 2 CPU % Used</text><rect x="779" y="498.5" width="4.4" height="4.6" fill="#3a4ea6"/><text x="786.00" y="502.80" font-size="5" fill="#3a3a3a" textLength="42.00" lengthAdjust="spacingAndGlyphs" >Peak 1 CPU % Used</text><rect x="833" y="498.5" width="4.4" height="4.6" fill="#456cc0"/><text x="840.00" y="502.80" font-size="5" fill="#3a3a3a" textLength="26.00" lengthAdjust="spacingAndGlyphs" >CPU Used %</text><rect x="725.2" y="507.90000000000003" width="4.4" height="4.6" fill="#6482b8"/><text x="732.20" y="512.20" font-size="5" fill="#3a3a3a" textLength="38.00" lengthAdjust="spacingAndGlyphs" >CPU User Mode %</text><rect x="779" y="507.90000000000003" width="4.4" height="4.6" fill="#8db3e6"/><text x="786.00" y="512.20" font-size="5" fill="#3a3a3a" textLength="42.00" lengthAdjust="spacingAndGlyphs" >CPU Kernel Mode %</text><g transform="translate(644.5,396.0) scale(1.0)"><polygon points="11.86,5.29 11.86,6.71 10.41,6.89 10.09,7.87 11.15,8.87 10.32,10.01 9.04,9.32 8.21,9.92 8.48,11.35 7.14,11.79 6.51,10.47 5.49,10.47 4.86,11.79 3.52,11.35 3.79,9.92 2.96,9.32 1.68,10.01 0.85,8.87 1.91,7.87 1.59,6.89 0.14,6.71 0.14,5.29 1.59,5.11 1.91,4.13 0.85,3.13 1.68,1.99 2.96,2.68 3.79,2.08 3.52,0.65 4.86,0.21 5.49,1.53 6.51,1.53 7.14,0.21 8.48,0.65 8.21,2.08 9.04,2.68 10.32,1.99 11.15,3.13 10.09,4.13 10.41,5.11" fill="#b6b6b6" stroke="#b6b6b6" stroke-width="0.6" stroke-linejoin="round"/><circle cx="6" cy="6" r="3.3" fill="#cdcdcd"/><circle cx="6" cy="6" r="1.25" fill="#f3f3f3"/><circle cx="10.3" cy="9.2" r="3.5" fill="#74b81f" stroke="#5a9a14" stroke-width="0.5"/><path d="M8.4 9.2h3.8M10.3 7.299999999999999v3.8" stroke="#fff" stroke-width="1.2"/></g>
</svg>
</div>
<svg style="position:absolute;left:0;top:0;z-index:20" width="977" height="522" viewBox="0 0 977 522"><path d="M0 0H977V522H0Z M2.6 1.7V518.9H975V1.7Z" fill="#000" fill-rule="evenodd"/></svg>
</body></html>
